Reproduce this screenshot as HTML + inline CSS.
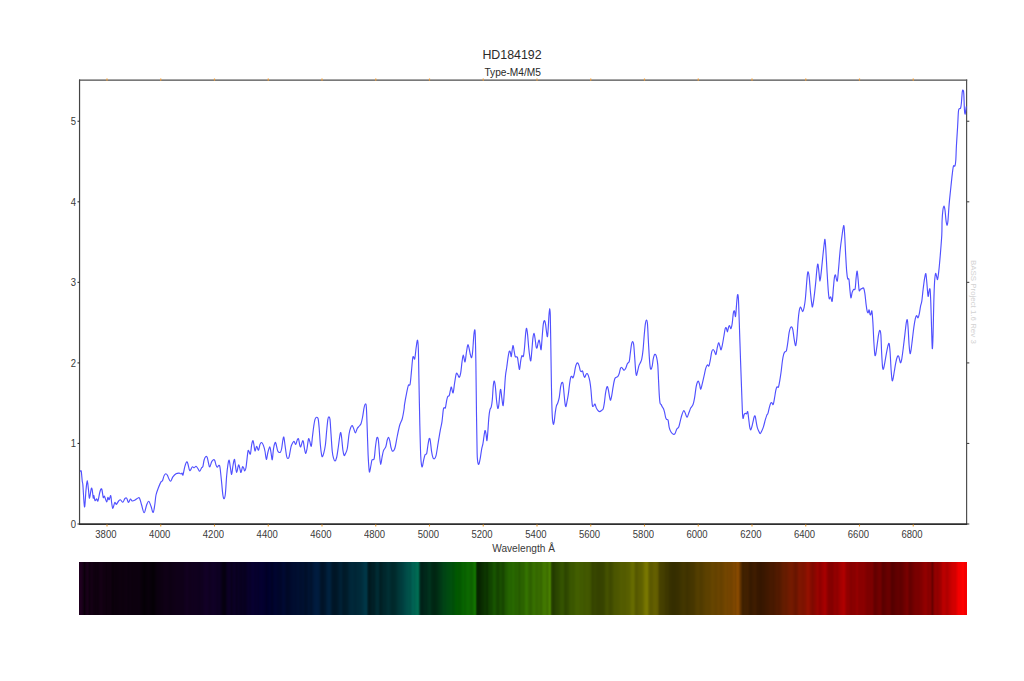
<!DOCTYPE html>
<html><head><meta charset="utf-8"><title>HD184192</title>
<style>
html,body{margin:0;padding:0;background:#fff;}
body{width:1024px;height:681px;position:relative;overflow:hidden;font-family:"Liberation Sans",sans-serif;color:#333;}
.t1{position:absolute;left:412px;width:200px;top:48px;text-align:center;font-size:12.4px;line-height:14px;color:#2a2a2a;}
.t2{position:absolute;left:412.7px;width:200px;top:66.8px;text-align:center;font-size:10.2px;line-height:12px;color:#2a2a2a;}
.xl{position:absolute;top:528.4px;width:40px;text-align:center;font-size:9.5px;line-height:11px;color:#3a3a3a;transform:scaleY(1.17);transform-origin:50% 50%;}
.yl{position:absolute;left:40px;width:36px;text-align:right;font-size:9.5px;line-height:12px;color:#3a3a3a;transform:scaleY(1.17);transform-origin:50% 50%;}
.xt{position:absolute;left:423.6px;width:200px;top:543.4px;text-align:center;font-size:10.15px;line-height:12px;color:#3a3a3a;}
.wm{position:absolute;left:978.4px;top:260px;font-size:7.9px;line-height:9px;color:#d2d2d2;white-space:nowrap;transform-origin:0 0;transform:rotate(90deg);}
</style></head><body>
<svg width="1024" height="681" viewBox="0 0 1024 681" style="position:absolute;left:0;top:0">
<line x1="79" y1="80.2" x2="967.2" y2="80.2" stroke="#4c4c4c" stroke-width="1.3"/>
<line x1="79.55" y1="79.6" x2="79.55" y2="524.8" stroke="#444" stroke-width="1.2"/>
<line x1="966.6" y1="79.6" x2="966.6" y2="524.8" stroke="#505050" stroke-width="1.2"/>
<line x1="79" y1="524.1" x2="967.2" y2="524.1" stroke="#2e2e2e" stroke-width="1.8"/>
<line x1="107.00" y1="78.5" x2="107.00" y2="80.7" stroke="#f0a040" stroke-width="1.2"/>
<line x1="107.00" y1="524.6" x2="107.00" y2="526.5" stroke="#f0a030" stroke-width="1.1"/>
<line x1="160.75" y1="78.5" x2="160.75" y2="80.7" stroke="#f0a040" stroke-width="1.2"/>
<line x1="160.75" y1="524.6" x2="160.75" y2="526.5" stroke="#f0a030" stroke-width="1.1"/>
<line x1="214.50" y1="78.5" x2="214.50" y2="80.7" stroke="#f0a040" stroke-width="1.2"/>
<line x1="214.50" y1="524.6" x2="214.50" y2="526.5" stroke="#f0a030" stroke-width="1.1"/>
<line x1="268.25" y1="78.5" x2="268.25" y2="80.7" stroke="#f0a040" stroke-width="1.2"/>
<line x1="268.25" y1="524.6" x2="268.25" y2="526.5" stroke="#f0a030" stroke-width="1.1"/>
<line x1="322.00" y1="78.5" x2="322.00" y2="80.7" stroke="#f0a040" stroke-width="1.2"/>
<line x1="322.00" y1="524.6" x2="322.00" y2="526.5" stroke="#f0a030" stroke-width="1.1"/>
<line x1="375.75" y1="78.5" x2="375.75" y2="80.7" stroke="#f0a040" stroke-width="1.2"/>
<line x1="375.75" y1="524.6" x2="375.75" y2="526.5" stroke="#f0a030" stroke-width="1.1"/>
<line x1="429.50" y1="78.5" x2="429.50" y2="80.7" stroke="#f0a040" stroke-width="1.2"/>
<line x1="429.50" y1="524.6" x2="429.50" y2="526.5" stroke="#f0a030" stroke-width="1.1"/>
<line x1="483.25" y1="78.5" x2="483.25" y2="80.7" stroke="#f0a040" stroke-width="1.2"/>
<line x1="483.25" y1="524.6" x2="483.25" y2="526.5" stroke="#f0a030" stroke-width="1.1"/>
<line x1="537.00" y1="78.5" x2="537.00" y2="80.7" stroke="#f0a040" stroke-width="1.2"/>
<line x1="537.00" y1="524.6" x2="537.00" y2="526.5" stroke="#f0a030" stroke-width="1.1"/>
<line x1="590.75" y1="78.5" x2="590.75" y2="80.7" stroke="#f0a040" stroke-width="1.2"/>
<line x1="590.75" y1="524.6" x2="590.75" y2="526.5" stroke="#f0a030" stroke-width="1.1"/>
<line x1="644.50" y1="78.5" x2="644.50" y2="80.7" stroke="#f0a040" stroke-width="1.2"/>
<line x1="644.50" y1="524.6" x2="644.50" y2="526.5" stroke="#f0a030" stroke-width="1.1"/>
<line x1="698.25" y1="78.5" x2="698.25" y2="80.7" stroke="#f0a040" stroke-width="1.2"/>
<line x1="698.25" y1="524.6" x2="698.25" y2="526.5" stroke="#f0a030" stroke-width="1.1"/>
<line x1="752.00" y1="78.5" x2="752.00" y2="80.7" stroke="#f0a040" stroke-width="1.2"/>
<line x1="752.00" y1="524.6" x2="752.00" y2="526.5" stroke="#f0a030" stroke-width="1.1"/>
<line x1="805.75" y1="78.5" x2="805.75" y2="80.7" stroke="#f0a040" stroke-width="1.2"/>
<line x1="805.75" y1="524.6" x2="805.75" y2="526.5" stroke="#f0a030" stroke-width="1.1"/>
<line x1="859.50" y1="78.5" x2="859.50" y2="80.7" stroke="#f0a040" stroke-width="1.2"/>
<line x1="859.50" y1="524.6" x2="859.50" y2="526.5" stroke="#f0a030" stroke-width="1.1"/>
<line x1="913.25" y1="78.5" x2="913.25" y2="80.7" stroke="#f0a040" stroke-width="1.2"/>
<line x1="913.25" y1="524.6" x2="913.25" y2="526.5" stroke="#f0a030" stroke-width="1.1"/>
<line x1="77.5" y1="524.00" x2="79.5" y2="524.00" stroke="#333" stroke-width="1.1"/>
<line x1="967" y1="524.00" x2="969.3" y2="524.00" stroke="#444" stroke-width="1.1"/>
<line x1="77.5" y1="443.45" x2="79.5" y2="443.45" stroke="#333" stroke-width="1.1"/>
<line x1="967" y1="443.45" x2="969.3" y2="443.45" stroke="#444" stroke-width="1.1"/>
<line x1="77.5" y1="362.90" x2="79.5" y2="362.90" stroke="#333" stroke-width="1.1"/>
<line x1="967" y1="362.90" x2="969.3" y2="362.90" stroke="#444" stroke-width="1.1"/>
<line x1="77.5" y1="282.35" x2="79.5" y2="282.35" stroke="#333" stroke-width="1.1"/>
<line x1="967" y1="282.35" x2="969.3" y2="282.35" stroke="#444" stroke-width="1.1"/>
<line x1="77.5" y1="201.80" x2="79.5" y2="201.80" stroke="#333" stroke-width="1.1"/>
<line x1="967" y1="201.80" x2="969.3" y2="201.80" stroke="#444" stroke-width="1.1"/>
<line x1="77.5" y1="121.25" x2="79.5" y2="121.25" stroke="#333" stroke-width="1.1"/>
<line x1="967" y1="121.25" x2="969.3" y2="121.25" stroke="#444" stroke-width="1.1"/>
<path d="M80.00 471.50 C80.06 471.46 80.17 471.29 80.38 471.25 C80.58 471.21 80.94 469.58 81.25 471.25 C81.56 472.92 81.98 478.96 82.25 481.25 C82.52 483.54 82.50 480.73 82.88 485.00 C83.25 489.27 83.98 506.04 84.50 506.88 C85.02 507.71 85.54 494.38 86.00 490.00 C86.46 485.62 86.83 480.62 87.25 480.62 C87.67 480.62 88.12 487.08 88.50 490.00 C88.88 492.92 89.04 498.33 89.50 498.12 C89.96 497.92 90.79 490.10 91.25 488.75 C91.71 487.40 91.92 488.44 92.25 490.00 C92.58 491.56 92.98 497.19 93.25 498.12 C93.52 499.06 93.58 495.21 93.88 495.62 C94.17 496.04 94.54 500.10 95.00 500.62 C95.46 501.15 96.15 498.69 96.62 498.75 C97.10 498.81 97.35 502.04 97.88 501.00 C98.40 499.96 99.23 494.50 99.75 492.50 C100.27 490.50 100.62 489.42 101.00 489.00 C101.38 488.58 101.62 488.58 102.00 490.00 C102.38 491.42 102.83 496.46 103.25 497.50 C103.67 498.54 103.94 495.52 104.50 496.25 C105.06 496.98 106.06 501.67 106.62 501.88 C107.19 502.08 107.46 497.85 107.88 497.50 C108.29 497.15 108.65 500.06 109.12 499.75 C109.60 499.44 110.33 495.17 110.75 495.62 C111.17 496.08 111.27 500.35 111.62 502.50 C111.98 504.65 112.35 508.50 112.88 508.50 C113.40 508.50 114.19 503.19 114.75 502.50 C115.31 501.81 115.62 504.58 116.25 504.38 C116.88 504.17 117.81 502.02 118.50 501.25 C119.19 500.48 119.65 499.58 120.38 499.75 C121.10 499.92 122.15 502.42 122.88 502.25 C123.60 502.08 124.12 499.44 124.75 498.75 C125.38 498.06 126.00 497.50 126.62 498.12 C127.25 498.75 127.88 502.35 128.50 502.50 C129.12 502.65 129.75 499.25 130.38 499.00 C131.00 498.75 131.52 500.79 132.25 501.00 C132.98 501.21 133.71 500.79 134.75 500.25 C135.79 499.71 137.67 498.00 138.50 497.75 C139.33 497.50 139.23 497.54 139.75 498.75 C140.27 499.96 140.90 502.67 141.62 505.00 C142.35 507.33 143.29 512.75 144.12 512.75 C144.96 512.75 145.85 506.92 146.62 505.00 C147.40 503.08 148.02 501.04 148.75 501.25 C149.48 501.46 150.27 504.38 151.00 506.25 C151.73 508.12 152.50 512.71 153.12 512.50 C153.75 512.29 154.27 507.92 154.75 505.00 C155.23 502.08 155.38 497.92 156.00 495.00 C156.62 492.08 157.67 489.69 158.50 487.50 C159.33 485.31 160.33 483.02 161.00 481.88 C161.67 480.73 161.98 481.67 162.50 480.62 C163.02 479.58 163.58 476.77 164.12 475.62 C164.67 474.48 165.23 473.85 165.75 473.75 C166.27 473.65 166.48 473.75 167.25 475.00 C168.02 476.25 169.44 480.94 170.38 481.25 C171.31 481.56 171.94 478.12 172.88 476.88 C173.81 475.62 174.96 474.38 176.00 473.75 C177.04 473.12 178.29 473.08 179.12 473.12 C179.96 473.17 180.52 474.00 181.00 474.00 C181.48 474.00 181.67 472.96 182.00 473.12 C182.33 473.29 182.54 476.04 183.00 475.00 C183.46 473.96 184.15 469.06 184.75 466.88 C185.35 464.69 186.10 462.40 186.62 461.88 C187.15 461.35 187.35 462.29 187.88 463.75 C188.40 465.21 189.02 470.10 189.75 470.62 C190.48 471.15 191.52 467.35 192.25 466.88 C192.98 466.40 193.50 467.85 194.12 467.75 C194.75 467.65 195.38 466.12 196.00 466.25 C196.62 466.38 197.25 467.67 197.88 468.50 C198.50 469.33 199.12 471.38 199.75 471.25 C200.38 471.12 201.10 468.54 201.62 467.75 C202.15 466.96 202.46 467.79 202.88 466.50 C203.29 465.21 203.65 461.65 204.12 460.00 C204.60 458.35 205.23 457.04 205.75 456.62 C206.27 456.21 206.79 456.42 207.25 457.50 C207.71 458.58 208.08 461.56 208.50 463.12 C208.92 464.69 209.23 467.08 209.75 466.88 C210.27 466.67 211.00 463.06 211.62 461.88 C212.25 460.69 212.98 459.96 213.50 459.75 C214.02 459.54 214.33 459.75 214.75 460.62 C215.17 461.50 215.58 463.90 216.00 465.00 C216.42 466.10 216.77 467.21 217.25 467.25 C217.73 467.29 218.42 465.21 218.88 465.25 C219.33 465.29 219.54 464.62 220.00 467.50 C220.46 470.38 221.15 477.92 221.62 482.50 C222.10 487.08 222.46 492.29 222.88 495.00 C223.29 497.71 223.71 498.96 224.12 498.75 C224.54 498.54 224.96 497.50 225.38 493.75 C225.79 490.00 226.21 481.04 226.62 476.25 C227.04 471.46 227.46 467.67 227.88 465.00 C228.29 462.33 228.71 459.83 229.12 460.25 C229.54 460.67 229.96 465.15 230.38 467.50 C230.79 469.85 231.21 474.58 231.62 474.38 C232.04 474.17 232.42 468.75 232.88 466.25 C233.33 463.75 233.96 459.58 234.38 459.38 C234.79 459.17 235.00 462.81 235.38 465.00 C235.75 467.19 236.10 472.50 236.62 472.50 C237.15 472.50 237.98 465.73 238.50 465.00 C239.02 464.27 239.33 466.88 239.75 468.12 C240.17 469.38 240.54 472.71 241.00 472.50 C241.46 472.29 242.04 467.60 242.50 466.88 C242.96 466.15 243.38 467.44 243.75 468.12 C244.12 468.81 244.38 471.10 244.75 471.00 C245.12 470.90 245.48 470.69 246.00 467.50 C246.52 464.31 247.42 454.62 247.88 451.88 C248.33 449.12 248.33 450.65 248.75 451.00 C249.17 451.35 249.90 455.00 250.38 454.00 C250.85 453.00 251.21 447.23 251.62 445.00 C252.04 442.77 252.50 440.73 252.88 440.62 C253.25 440.52 253.52 442.65 253.88 444.38 C254.23 446.10 254.54 450.69 255.00 451.00 C255.46 451.31 256.04 446.38 256.62 446.25 C257.21 446.12 257.94 450.56 258.50 450.25 C259.06 449.94 259.48 445.67 260.00 444.38 C260.52 443.08 261.04 442.29 261.62 442.50 C262.21 442.71 262.94 444.17 263.50 445.62 C264.06 447.08 264.52 448.96 265.00 451.25 C265.48 453.54 265.90 459.17 266.38 459.38 C266.85 459.58 267.31 454.58 267.88 452.50 C268.44 450.42 269.23 446.88 269.75 446.88 C270.27 446.88 270.58 450.35 271.00 452.50 C271.42 454.65 271.83 460.38 272.25 459.75 C272.67 459.12 273.04 451.58 273.50 448.75 C273.96 445.92 274.58 443.58 275.00 442.75 C275.42 441.92 275.52 442.33 276.00 443.75 C276.48 445.17 277.15 449.83 277.88 451.25 C278.60 452.67 279.75 452.67 280.38 452.25 C281.00 451.83 281.21 450.79 281.62 448.75 C282.04 446.71 282.50 441.92 282.88 440.00 C283.25 438.08 283.52 436.42 283.88 437.25 C284.23 438.08 284.54 441.83 285.00 445.00 C285.46 448.17 286.15 454.00 286.62 456.25 C287.10 458.50 287.46 458.40 287.88 458.50 C288.29 458.60 288.60 458.81 289.12 456.88 C289.65 454.94 290.38 449.27 291.00 446.88 C291.62 444.48 292.35 443.40 292.88 442.50 C293.40 441.60 293.65 441.19 294.12 441.50 C294.60 441.81 295.23 444.62 295.75 444.38 C296.27 444.12 296.79 440.94 297.25 440.00 C297.71 439.06 298.08 437.92 298.50 438.75 C298.92 439.58 299.38 443.65 299.75 445.00 C300.12 446.35 300.33 447.40 300.75 446.88 C301.17 446.35 301.83 442.81 302.25 441.88 C302.67 440.94 302.88 440.10 303.25 441.25 C303.62 442.40 304.08 446.71 304.50 448.75 C304.92 450.79 305.33 453.50 305.75 453.50 C306.17 453.50 306.54 451.17 307.00 448.75 C307.46 446.33 308.04 440.25 308.50 439.00 C308.96 437.75 309.29 440.04 309.75 441.25 C310.21 442.46 310.79 447.08 311.25 446.25 C311.71 445.42 312.08 439.58 312.50 436.25 C312.92 432.92 313.33 429.06 313.75 426.25 C314.17 423.44 314.52 420.88 315.00 419.38 C315.48 417.88 316.10 417.35 316.62 417.25 C317.15 417.15 317.71 417.04 318.12 418.75 C318.54 420.46 318.75 423.12 319.12 427.50 C319.50 431.88 319.96 440.42 320.38 445.00 C320.79 449.58 321.27 453.08 321.62 455.00 C321.98 456.92 322.15 456.81 322.50 456.50 C322.85 456.19 323.27 455.04 323.75 453.12 C324.23 451.21 324.90 448.65 325.38 445.00 C325.85 441.35 326.21 435.52 326.62 431.25 C327.04 426.98 327.50 421.77 327.88 419.38 C328.25 416.98 328.52 416.88 328.88 416.88 C329.23 416.88 329.65 416.56 330.00 419.38 C330.35 422.19 330.62 428.44 331.00 433.75 C331.38 439.06 331.83 447.19 332.25 451.25 C332.67 455.31 333.04 456.50 333.50 458.12 C333.96 459.75 334.48 461.10 335.00 461.00 C335.52 460.90 336.08 459.75 336.62 457.50 C337.17 455.25 337.73 451.04 338.25 447.50 C338.77 443.96 339.33 438.75 339.75 436.25 C340.17 433.75 340.44 432.29 340.75 432.50 C341.06 432.71 341.27 434.58 341.62 437.50 C341.98 440.42 342.46 447.02 342.88 450.00 C343.29 452.98 343.71 454.75 344.12 455.38 C344.54 456.00 344.85 454.85 345.38 453.75 C345.90 452.65 346.62 452.08 347.25 448.75 C347.88 445.42 348.54 437.29 349.12 433.75 C349.71 430.21 350.23 428.85 350.75 427.50 C351.27 426.15 351.75 425.42 352.25 425.62 C352.75 425.83 353.23 427.54 353.75 428.75 C354.27 429.96 354.79 432.92 355.38 432.88 C355.96 432.83 356.62 429.60 357.25 428.50 C357.88 427.40 358.50 427.04 359.12 426.25 C359.75 425.46 360.44 425.21 361.00 423.75 C361.56 422.29 361.98 420.21 362.50 417.50 C363.02 414.79 363.65 409.75 364.12 407.50 C364.60 405.25 365.00 404.00 365.38 404.00 C365.75 404.00 366.06 403.17 366.38 407.50 C366.69 411.83 366.96 422.08 367.25 430.00 C367.54 437.92 367.81 448.33 368.12 455.00 C368.44 461.67 368.85 467.25 369.12 470.00 C369.40 472.75 369.44 472.33 369.75 471.50 C370.06 470.67 370.62 466.92 371.00 465.00 C371.38 463.08 371.48 461.04 372.00 460.00 C372.52 458.96 373.56 460.83 374.12 458.75 C374.69 456.67 374.96 450.83 375.38 447.50 C375.79 444.17 376.25 440.42 376.62 438.75 C377.00 437.08 377.31 437.08 377.62 437.50 C377.94 437.92 378.15 437.92 378.50 441.25 C378.85 444.58 379.38 453.65 379.75 457.50 C380.12 461.35 380.38 464.38 380.75 464.38 C381.12 464.38 381.54 459.79 382.00 457.50 C382.46 455.21 382.88 452.40 383.50 450.62 C384.12 448.85 385.12 448.65 385.75 446.88 C386.38 445.10 386.79 441.60 387.25 440.00 C387.71 438.40 388.08 437.15 388.50 437.25 C388.92 437.35 389.33 438.92 389.75 440.62 C390.17 442.33 390.58 445.77 391.00 447.50 C391.42 449.23 391.73 450.58 392.25 451.00 C392.77 451.42 393.60 450.79 394.12 450.00 C394.65 449.21 394.85 448.54 395.38 446.25 C395.90 443.96 396.52 439.79 397.25 436.25 C397.98 432.71 398.92 427.92 399.75 425.00 C400.58 422.08 401.52 421.46 402.25 418.75 C402.98 416.04 403.75 411.12 404.12 408.75 C404.50 406.38 404.12 407.20 404.52 404.54 C404.94 401.89 406.01 396.02 406.65 392.83 C407.29 389.63 407.78 386.79 408.35 385.37 C408.92 383.95 409.56 386.44 410.06 384.31 C410.55 382.18 410.91 376.86 411.33 372.60 C411.76 368.34 412.26 361.41 412.61 358.75 C412.97 356.09 413.11 356.62 413.46 356.62 C413.82 356.62 414.28 360.35 414.74 358.75 C415.20 357.15 415.77 350.13 416.23 347.04 C416.69 343.95 417.16 339.87 417.51 340.22 C417.87 340.58 418.11 342.00 418.36 349.17 C418.61 356.34 418.75 370.47 419.00 383.24 C419.25 396.02 419.57 413.77 419.85 425.84 C420.14 437.91 420.42 449.09 420.71 455.66 C420.99 462.22 421.27 463.47 421.56 465.24 C421.84 467.02 422.05 467.19 422.41 466.31 C422.76 465.42 423.23 461.87 423.69 459.92 C424.15 457.96 424.68 455.66 425.18 454.59 C425.67 453.53 426.21 455.12 426.67 453.53 C427.13 451.93 427.52 447.49 427.95 445.01 C428.37 442.52 428.83 439.33 429.22 438.62 C429.62 437.91 429.90 438.62 430.29 440.75 C430.68 442.88 431.14 448.63 431.57 451.40 C431.99 454.17 432.38 456.12 432.85 457.36 C433.31 458.60 433.80 459.14 434.34 458.85 C434.87 458.57 435.40 458.32 436.04 455.66 C436.68 453.00 437.46 447.14 438.17 442.88 C438.88 438.62 439.66 433.65 440.30 430.10 C440.94 426.55 441.51 424.95 442.00 421.58 C442.50 418.21 442.93 412.17 443.28 409.87 C443.64 407.56 443.78 408.09 444.13 407.74 C444.49 407.38 444.99 408.98 445.41 407.74 C445.84 406.49 446.30 402.16 446.69 400.28 C447.08 398.40 447.33 397.23 447.75 396.45 C448.18 395.67 448.82 396.56 449.24 395.60 C449.67 394.64 449.95 392.12 450.31 390.70 C450.66 389.28 450.91 386.72 451.37 387.08 C451.84 387.43 452.55 393.47 453.08 392.83 C453.61 392.19 454.04 386.44 454.57 383.24 C455.10 380.05 455.74 375.08 456.27 373.66 C456.81 372.24 457.27 374.12 457.76 374.73 C458.26 375.33 458.76 377.64 459.25 377.28 C459.75 376.93 460.28 375.15 460.75 372.60 C461.21 370.04 461.60 364.86 462.02 361.95 C462.45 359.04 462.80 355.13 463.30 355.13 C463.80 355.13 464.51 362.23 465.00 361.95 C465.50 361.66 465.82 356.27 466.28 353.43 C466.74 350.59 467.31 345.80 467.77 344.91 C468.24 344.02 468.63 346.51 469.05 348.10 C469.48 349.70 469.90 352.90 470.33 354.49 C470.76 356.09 471.22 358.22 471.61 357.69 C472.00 357.15 472.32 354.85 472.67 351.30 C473.03 347.75 473.42 339.94 473.74 336.39 C474.06 332.84 474.34 330.35 474.59 330.00 C474.84 329.65 475.01 328.94 475.23 334.26 C475.44 339.58 475.65 348.46 475.87 361.95 C476.08 375.44 476.29 399.93 476.51 415.19 C476.72 430.45 476.90 445.54 477.14 453.53 C477.39 461.51 477.68 461.41 478.00 463.11 C478.32 464.82 478.67 464.64 479.06 463.75 C479.45 462.86 479.91 460.20 480.34 457.79 C480.77 455.37 481.19 451.58 481.62 449.27 C482.04 446.96 482.50 446.07 482.90 443.94 C483.29 441.81 483.61 438.73 483.96 436.49 C484.32 434.25 484.67 430.88 485.02 430.53 C485.38 430.17 485.77 432.66 486.09 434.36 C486.41 436.06 486.66 441.10 486.94 440.75 C487.23 440.39 487.47 436.13 487.79 432.23 C488.11 428.33 488.50 421.05 488.86 417.32 C489.21 413.59 489.53 411.57 489.92 409.87 C490.31 408.16 490.81 408.70 491.20 407.10 C491.59 405.50 491.91 403.90 492.27 400.28 C492.62 396.66 492.98 388.57 493.33 385.37 C493.69 382.18 494.04 380.76 494.40 381.11 C494.75 381.47 495.11 384.31 495.46 387.50 C495.82 390.70 496.14 396.80 496.53 400.28 C496.92 403.76 497.41 407.67 497.80 408.38 C498.19 409.09 498.51 407.13 498.87 404.54 C499.22 401.95 499.61 395.31 499.93 392.83 C500.25 390.34 500.47 388.75 500.79 389.63 C501.10 390.52 501.46 395.49 501.85 398.15 C502.24 400.82 502.74 406.32 503.13 405.61 C503.52 404.90 503.80 398.86 504.19 393.89 C504.58 388.92 505.04 380.23 505.47 375.79 C505.90 371.35 506.32 370.29 506.75 367.27 C507.17 364.25 507.60 360.35 508.03 357.69 C508.45 355.02 508.91 352.19 509.30 351.30 C509.69 350.41 510.05 351.48 510.37 352.36 C510.69 353.25 510.90 357.15 511.22 356.62 C511.54 356.09 511.97 351.01 512.29 349.17 C512.61 347.32 512.82 345.19 513.14 345.55 C513.46 345.90 513.85 349.45 514.20 351.30 C514.56 353.14 514.74 355.63 515.27 356.62 C515.80 357.62 516.87 356.02 517.40 357.26 C517.93 358.50 518.11 362.05 518.46 364.08 C518.82 366.10 519.16 369.90 519.53 369.40 C519.90 368.90 520.31 363.37 520.69 361.10 C521.08 358.82 521.39 356.55 521.84 355.75 C522.28 354.96 522.92 357.66 523.37 356.32 C523.81 354.99 524.13 351.55 524.51 347.73 C524.89 343.91 525.31 336.66 525.66 333.41 C526.01 330.17 526.29 328.10 526.61 328.26 C526.93 328.42 527.22 331.12 527.57 334.37 C527.92 337.61 528.33 343.91 528.71 347.73 C529.09 351.55 529.51 355.12 529.86 357.28 C530.21 359.44 530.49 361.67 530.81 360.72 C531.13 359.76 531.42 355.31 531.77 351.55 C532.12 347.80 532.53 341.21 532.91 338.19 C533.29 335.16 533.71 333.41 534.06 333.41 C534.41 333.41 534.66 335.96 535.01 338.19 C535.36 340.41 535.81 345.19 536.16 346.78 C536.51 348.37 536.79 348.37 537.11 347.73 C537.43 347.10 537.72 344.23 538.07 342.96 C538.42 341.69 538.86 339.78 539.21 340.10 C539.56 340.41 539.85 343.28 540.17 344.87 C540.49 346.46 540.80 350.76 541.12 349.64 C541.44 348.53 541.73 342.32 542.08 338.19 C542.43 334.05 542.84 327.75 543.22 324.82 C543.60 321.89 543.99 320.78 544.37 320.62 C544.75 320.46 545.16 322.05 545.51 323.87 C545.86 325.68 546.15 329.37 546.47 331.50 C546.79 333.64 547.14 337.14 547.42 336.66 C547.71 336.18 547.93 332.20 548.19 328.64 C548.44 325.08 548.70 318.62 548.95 315.27 C549.20 311.93 549.49 308.59 549.71 308.59 C549.94 308.59 550.10 308.75 550.29 315.27 C550.48 321.80 550.67 335.96 550.86 347.73 C551.05 359.51 551.21 374.78 551.43 385.92 C551.65 397.06 551.91 408.26 552.20 414.56 C552.48 420.86 552.83 422.45 553.15 423.72 C553.47 425.00 553.75 424.04 554.11 422.20 C554.46 420.35 554.87 415.35 555.25 412.65 C555.63 409.94 555.98 407.56 556.40 405.97 C556.81 404.38 557.26 404.53 557.73 403.10 C558.21 401.67 558.78 400.08 559.26 397.37 C559.74 394.67 560.15 389.36 560.60 386.87 C561.04 384.39 561.52 382.96 561.93 382.48 C562.35 382.00 562.73 382.16 563.08 384.01 C563.43 385.86 563.72 390.37 564.03 393.56 C564.35 396.74 564.67 400.94 564.99 403.10 C565.31 405.27 565.59 406.86 565.94 406.54 C566.29 406.22 566.67 403.36 567.09 401.19 C567.50 399.03 568.01 396.42 568.42 393.56 C568.84 390.69 569.19 386.71 569.57 384.01 C569.95 381.30 570.33 378.60 570.72 377.33 C571.10 376.05 571.48 376.28 571.86 376.37 C572.24 376.47 572.63 378.22 573.01 377.90 C573.39 377.58 573.77 376.15 574.15 374.46 C574.53 372.78 574.92 369.53 575.30 367.78 C575.68 366.03 576.03 364.76 576.44 363.96 C576.86 363.17 577.33 362.69 577.78 363.01 C578.23 363.33 578.70 364.60 579.12 365.87 C579.53 367.14 579.88 369.69 580.26 370.64 C580.64 371.60 581.03 371.54 581.41 371.60 C581.79 371.66 582.17 370.39 582.55 371.03 C582.94 371.66 583.32 374.37 583.70 375.42 C584.08 376.47 584.46 377.49 584.84 377.33 C585.23 377.17 585.61 375.10 585.99 374.46 C586.37 373.83 586.75 373.35 587.14 373.51 C587.52 373.67 587.84 374.14 588.28 375.42 C588.73 376.69 589.36 378.76 589.81 381.15 C590.25 383.53 590.64 386.71 590.95 389.74 C591.27 392.76 591.46 396.58 591.72 399.28 C591.97 401.99 592.16 404.85 592.48 405.97 C592.80 407.08 593.21 406.28 593.63 405.97 C594.04 405.65 594.52 403.74 594.96 404.06 C595.41 404.38 595.82 406.83 596.30 407.88 C596.78 408.93 597.26 409.72 597.83 410.36 C598.40 410.99 599.10 411.69 599.74 411.69 C600.37 411.69 601.07 410.84 601.65 410.36 C602.22 409.88 602.73 410.04 603.17 408.83 C603.62 407.62 603.94 405.65 604.32 403.10 C604.70 400.56 605.08 396.10 605.47 393.56 C605.85 391.01 606.26 388.94 606.61 387.83 C606.96 386.71 607.25 386.40 607.57 386.87 C607.88 387.35 608.17 388.94 608.52 390.69 C608.87 392.44 609.32 395.78 609.67 397.37 C610.02 398.97 610.27 400.56 610.62 400.24 C610.97 399.92 611.35 397.69 611.77 395.47 C612.18 393.24 612.63 389.58 613.10 386.87 C613.58 384.17 614.12 380.83 614.63 379.24 C615.14 377.65 615.62 377.80 616.16 377.33 C616.70 376.85 617.37 377.01 617.88 376.37 C618.39 375.74 618.80 374.78 619.21 373.51 C619.63 372.24 619.98 369.79 620.36 368.74 C620.74 367.68 621.06 367.14 621.50 367.21 C621.95 367.27 622.59 368.61 623.03 369.12 C623.48 369.63 623.73 370.39 624.18 370.26 C624.62 370.14 625.19 369.40 625.70 368.35 C626.21 367.30 626.79 364.92 627.23 363.96 C627.68 363.01 628.03 363.10 628.38 362.63 C628.73 362.15 629.01 362.63 629.33 361.10 C629.65 359.57 629.94 356.17 630.29 353.46 C630.64 350.76 631.05 346.84 631.43 344.87 C631.81 342.90 632.20 341.62 632.58 341.62 C632.96 341.62 633.37 342.26 633.72 344.87 C634.07 347.48 634.36 352.98 634.68 357.28 C635.00 361.58 635.35 367.62 635.63 370.64 C635.92 373.67 636.08 375.26 636.40 375.42 C636.71 375.58 637.13 373.19 637.54 371.60 C637.96 370.01 638.43 367.30 638.88 365.87 C639.32 364.44 639.74 364.12 640.21 363.01 C640.69 361.89 641.26 361.42 641.74 359.19 C642.22 356.96 642.67 353.62 643.08 349.64 C643.49 345.66 643.84 339.62 644.22 335.32 C644.61 331.03 644.99 326.41 645.37 323.87 C645.75 321.32 646.17 320.05 646.52 320.05 C646.87 320.05 647.18 320.84 647.47 323.87 C647.76 326.89 647.95 332.94 648.23 338.19 C648.52 343.44 648.87 350.60 649.19 355.37 C649.51 360.14 649.82 364.53 650.14 366.83 C650.46 369.12 650.75 369.28 651.10 369.12 C651.45 368.96 651.89 367.53 652.24 365.87 C652.59 364.22 652.85 361.00 653.20 359.19 C653.55 357.37 653.96 355.78 654.34 354.99 C654.73 354.19 655.11 354.03 655.49 354.42 C655.87 354.80 656.25 355.53 656.63 357.28 C657.02 359.03 657.46 361.10 657.78 364.92 C658.10 368.74 658.29 375.10 658.54 380.19 C658.80 385.28 659.05 391.65 659.31 395.47 C659.56 399.28 659.75 401.58 660.07 403.10 C660.39 404.63 660.84 403.99 661.22 404.63 C661.60 405.27 661.98 406.22 662.36 406.92 C662.74 407.62 663.13 407.88 663.51 408.83 C663.89 409.79 664.30 411.22 664.65 412.65 C665.00 414.08 665.29 416.31 665.61 417.42 C665.93 418.54 666.15 418.85 666.56 419.33 C666.98 419.81 667.64 418.90 668.09 420.29 C668.54 421.68 668.76 425.70 669.25 427.67 C669.74 429.63 670.35 430.97 671.01 432.07 C671.67 433.17 672.56 434.02 673.22 434.27 C673.88 434.53 674.39 434.46 674.98 433.61 C675.57 432.77 676.12 430.31 676.74 429.21 C677.36 428.11 678.14 428.36 678.72 427.00 C679.31 425.65 679.71 423.15 680.26 421.06 C680.81 418.96 681.44 416.21 682.03 414.45 C682.61 412.69 683.24 410.67 683.79 410.48 C684.34 410.30 684.78 412.21 685.33 413.35 C685.88 414.49 686.47 417.50 687.09 417.31 C687.72 417.13 688.45 413.83 689.07 412.25 C689.70 410.67 690.18 409.13 690.84 407.84 C691.50 406.56 692.42 406.19 693.04 404.54 C693.66 402.89 694.07 400.87 694.58 397.93 C695.10 394.99 695.65 389.56 696.12 386.92 C696.60 384.27 697.04 382.99 697.44 382.07 C697.85 381.15 698.18 380.97 698.55 381.41 C698.91 381.85 699.28 383.43 699.65 384.71 C700.01 386.00 700.31 389.30 700.75 389.12 C701.19 388.94 701.74 385.81 702.29 383.61 C702.84 381.41 703.47 378.47 704.05 375.90 C704.64 373.33 705.26 370.03 705.81 368.19 C706.37 366.36 706.84 365.26 707.36 364.89 C707.87 364.52 708.42 366.73 708.90 365.99 C709.38 365.26 709.74 362.87 710.22 360.48 C710.70 358.10 711.28 353.51 711.76 351.67 C712.24 349.84 712.61 349.47 713.08 349.47 C713.56 349.47 714.15 350.83 714.63 351.67 C715.10 352.52 715.51 355.20 715.95 354.54 C716.39 353.88 716.83 349.65 717.27 347.71 C717.71 345.76 718.15 343.12 718.59 342.86 C719.03 342.61 719.51 344.99 719.91 346.17 C720.32 347.34 720.61 350.10 721.01 349.91 C721.42 349.73 721.86 347.34 722.33 345.07 C722.81 342.79 723.40 339.01 723.88 336.26 C724.35 333.50 724.79 329.94 725.20 328.55 C725.60 327.15 725.93 327.33 726.30 327.89 C726.67 328.44 727.03 331.92 727.40 331.85 C727.77 331.78 728.14 328.47 728.50 327.44 C728.87 326.42 729.20 325.50 729.60 325.68 C730.01 325.87 730.48 328.99 730.93 328.55 C731.37 328.11 731.84 325.61 732.25 323.04 C732.65 320.47 732.98 315.15 733.35 313.13 C733.72 311.11 734.08 310.37 734.45 310.93 C734.82 311.48 735.18 317.72 735.55 316.43 C735.92 315.15 736.32 306.81 736.65 303.22 C736.98 299.62 737.24 295.58 737.53 294.85 C737.83 294.11 738.12 294.11 738.41 298.81 C738.71 303.51 738.96 313.49 739.30 323.04 C739.63 332.58 740.03 345.43 740.40 356.08 C740.76 366.73 741.17 377.74 741.50 386.92 C741.83 396.09 742.12 405.90 742.38 411.15 C742.64 416.40 742.75 417.86 743.04 418.41 C743.33 418.96 743.74 415.29 744.14 414.45 C744.54 413.60 745.06 413.46 745.46 413.35 C745.87 413.24 746.20 414.08 746.56 413.79 C746.93 413.49 747.33 410.93 747.67 411.59 C748.00 412.25 748.22 415.26 748.55 417.75 C748.88 420.25 749.32 424.54 749.65 426.56 C749.98 428.58 750.20 429.68 750.53 429.87 C750.86 430.05 751.23 428.95 751.63 427.67 C752.03 426.38 752.55 423.88 752.95 422.16 C753.36 420.43 753.69 418.34 754.05 417.31 C754.42 416.28 754.79 415.18 755.15 415.99 C755.52 416.80 755.89 420.21 756.26 422.16 C756.62 424.10 756.95 426.20 757.36 427.67 C757.76 429.13 758.20 429.98 758.68 430.97 C759.16 431.96 759.71 433.61 760.22 433.61 C760.73 433.61 761.21 432.14 761.76 430.97 C762.31 429.79 762.94 428.40 763.52 426.56 C764.11 424.73 764.74 421.86 765.29 419.96 C765.84 418.05 766.39 416.21 766.83 415.11 C767.27 414.01 767.53 414.56 767.93 413.35 C768.33 412.14 768.81 409.49 769.25 407.84 C769.69 406.19 770.13 404.28 770.57 403.44 C771.01 402.59 771.45 402.59 771.89 402.78 C772.33 402.96 772.78 405.35 773.22 404.54 C773.66 403.73 774.10 400.32 774.54 397.93 C774.98 395.54 775.46 392.06 775.86 390.22 C776.26 388.38 776.52 387.47 776.96 386.92 C777.40 386.37 778.02 388.02 778.50 386.92 C778.98 385.81 779.38 382.88 779.82 380.31 C780.26 377.74 780.70 374.80 781.15 371.50 C781.59 368.19 782.03 363.42 782.47 360.48 C782.91 357.55 783.35 355.35 783.79 353.88 C784.23 352.41 784.67 352.22 785.11 351.67 C785.55 351.12 785.99 352.04 786.43 350.57 C786.87 349.10 787.31 345.80 787.75 342.86 C788.19 339.93 788.63 335.45 789.07 332.95 C789.52 330.46 789.96 328.88 790.40 327.89 C790.84 326.89 791.31 326.71 791.72 327.00 C792.12 327.30 792.45 327.92 792.82 329.65 C793.19 331.37 793.55 334.97 793.92 337.36 C794.29 339.74 794.69 342.68 795.02 343.96 C795.35 345.25 795.57 346.35 795.90 345.07 C796.23 343.78 796.64 340.29 797.00 336.26 C797.37 332.22 797.74 325.06 798.11 320.84 C798.47 316.62 798.84 313.20 799.21 310.93 C799.57 308.65 799.94 307.55 800.31 307.18 C800.68 306.81 801.01 307.99 801.41 308.72 C801.81 309.46 802.29 311.77 802.73 311.59 C803.17 311.40 803.61 309.75 804.05 307.62 C804.49 305.49 804.84 304.05 805.37 298.81 C805.90 293.57 806.76 280.64 807.23 276.16 C807.71 271.68 807.90 271.71 808.23 271.92 C808.56 272.12 808.85 274.00 809.23 277.41 C809.60 280.82 810.06 288.02 810.48 292.39 C810.89 296.75 811.39 301.21 811.73 303.62 C812.06 306.03 812.14 307.49 812.47 306.86 C812.81 306.24 813.22 303.54 813.72 299.88 C814.22 296.21 814.93 290.10 815.47 284.90 C816.01 279.70 816.55 272.12 816.97 268.67 C817.38 265.22 817.63 263.55 817.97 264.18 C818.30 264.80 818.63 269.59 818.96 272.42 C819.30 275.24 819.59 281.15 819.96 281.15 C820.34 281.15 820.71 276.78 821.21 272.42 C821.71 268.05 822.46 259.73 822.96 254.94 C823.46 250.16 823.87 246.29 824.21 243.71 C824.54 241.13 824.71 238.84 824.96 239.46 C825.21 240.09 825.37 242.38 825.70 247.45 C826.04 252.53 826.54 262.85 826.95 269.92 C827.37 276.99 827.83 285.11 828.20 289.89 C828.58 294.67 828.78 297.46 829.20 298.63 C829.62 299.79 830.20 296.46 830.70 296.88 C831.20 297.30 831.74 302.70 832.20 301.12 C832.65 299.54 833.07 291.35 833.44 287.39 C833.82 283.44 834.11 279.49 834.44 277.41 C834.77 275.33 835.11 274.58 835.44 274.91 C835.77 275.24 836.11 278.49 836.44 279.41 C836.77 280.32 837.06 282.40 837.44 280.40 C837.81 278.41 838.23 272.50 838.69 267.42 C839.14 262.35 839.64 255.15 840.18 249.95 C840.72 244.75 841.35 240.30 841.93 236.22 C842.51 232.14 843.22 225.69 843.68 225.48 C844.14 225.28 844.34 230.06 844.68 234.97 C845.01 239.88 845.34 248.91 845.68 254.94 C846.01 260.97 846.34 267.21 846.67 271.17 C847.01 275.12 847.30 277.28 847.67 278.66 C848.05 280.03 848.55 277.53 848.92 279.41 C849.30 281.28 849.59 286.81 849.92 289.89 C850.25 292.97 850.54 297.46 850.92 297.88 C851.29 298.29 851.71 293.80 852.17 292.39 C852.62 290.97 853.16 290.01 853.66 289.39 C854.16 288.77 854.75 290.64 855.16 288.64 C855.58 286.64 855.83 280.32 856.16 277.41 C856.49 274.50 856.83 270.75 857.16 271.17 C857.49 271.58 857.82 276.70 858.16 279.90 C858.49 283.11 858.78 288.81 859.16 290.39 C859.53 291.97 859.95 289.68 860.40 289.39 C860.86 289.10 861.36 288.85 861.90 288.64 C862.44 288.43 863.15 287.31 863.65 288.14 C864.15 288.97 864.48 290.85 864.90 293.63 C865.31 296.42 865.77 301.96 866.15 304.87 C866.52 307.78 866.81 309.78 867.14 311.11 C867.48 312.44 867.81 313.06 868.14 312.86 C868.48 312.65 868.81 309.53 869.14 309.86 C869.47 310.19 869.81 314.23 870.14 314.85 C870.47 315.48 870.85 314.23 871.14 313.60 C871.43 312.98 871.60 309.65 871.89 311.11 C872.18 312.56 872.55 317.14 872.89 322.34 C873.22 327.54 873.55 336.90 873.88 342.31 C874.22 347.72 874.55 352.92 874.88 354.79 C875.22 356.67 875.51 355.21 875.88 353.55 C876.26 351.88 876.67 348.01 877.13 344.81 C877.59 341.61 878.17 336.74 878.63 334.32 C879.08 331.91 879.50 330.25 879.88 330.33 C880.25 330.41 880.58 331.16 880.87 334.82 C881.16 338.49 881.33 346.81 881.62 352.30 C881.91 357.79 882.29 365.07 882.62 367.78 C882.95 370.48 883.25 369.44 883.62 368.52 C883.99 367.61 884.41 364.78 884.87 362.28 C885.33 359.79 885.87 356.25 886.37 353.55 C886.86 350.84 887.41 347.72 887.86 346.06 C888.32 344.39 888.74 342.52 889.11 343.56 C889.49 344.60 889.78 347.93 890.11 352.30 C890.44 356.67 890.78 365.11 891.11 369.77 C891.44 374.43 891.77 378.80 892.11 380.26 C892.44 381.71 892.73 380.05 893.11 378.51 C893.48 376.97 893.90 373.72 894.35 371.02 C894.81 368.32 895.35 364.65 895.85 362.28 C896.35 359.91 896.89 357.83 897.35 356.79 C897.81 355.75 898.22 355.54 898.60 356.04 C898.97 356.54 899.26 358.66 899.60 359.79 C899.93 360.91 900.22 362.99 900.59 362.78 C900.97 362.57 901.39 361.12 901.84 358.54 C902.30 355.96 902.84 351.26 903.34 347.31 C903.84 343.35 904.34 338.98 904.84 334.82 C905.34 330.66 905.92 324.84 906.34 322.34 C906.75 319.85 907.04 319.01 907.33 319.85 C907.63 320.68 907.79 323.17 908.08 327.33 C908.37 331.50 908.75 340.44 909.08 344.81 C909.42 349.18 909.75 352.71 910.08 353.55 C910.41 354.38 910.70 352.09 911.08 349.80 C911.45 347.51 911.87 343.56 912.33 339.82 C912.79 336.07 913.33 330.87 913.83 327.33 C914.32 323.80 914.87 320.55 915.32 318.60 C915.78 316.64 916.11 315.73 916.57 315.60 C917.03 315.48 917.61 318.18 918.07 317.85 C918.53 317.52 918.90 315.56 919.32 313.60 C919.73 311.65 920.15 308.20 920.57 306.12 C920.98 304.04 921.40 303.83 921.81 301.12 C922.23 298.42 922.60 293.63 923.06 289.89 C923.52 286.15 924.10 281.36 924.56 278.66 C925.02 275.95 925.43 273.04 925.81 273.66 C926.18 274.29 926.43 278.66 926.81 282.40 C927.18 286.15 927.68 294.67 928.05 296.13 C928.43 297.59 928.72 292.26 929.05 291.14 C929.39 290.01 929.76 287.52 930.05 289.39 C930.34 291.26 930.55 296.05 930.80 302.37 C931.05 308.70 931.30 319.64 931.55 327.33 C931.80 335.03 932.05 347.31 932.30 348.55 C932.55 349.80 932.80 342.52 933.05 334.82 C933.30 327.13 933.55 311.11 933.80 302.37 C934.05 293.63 934.25 287.19 934.54 282.40 C934.84 277.62 935.21 274.70 935.54 273.66 C935.88 272.62 936.21 275.20 936.54 276.16 C936.87 277.12 937.17 280.24 937.54 279.41 C937.91 278.57 938.33 275.24 938.79 271.17 C939.25 267.09 939.79 260.97 940.29 254.94 C940.79 248.91 941.49 240.66 941.78 234.97 C942.08 229.28 941.89 224.94 942.08 220.82 C942.26 216.70 942.57 212.69 942.90 210.24 C943.23 207.79 943.72 206.13 944.07 206.13 C944.43 206.13 944.68 207.79 945.01 210.24 C945.35 212.69 945.74 218.31 946.07 220.82 C946.41 223.33 946.70 225.28 947.01 225.28 C947.33 225.28 947.60 224.30 947.95 220.82 C948.31 217.33 948.70 209.46 949.13 204.36 C949.56 199.27 950.01 195.35 950.54 190.26 C951.07 185.17 951.81 177.82 952.30 173.81 C952.79 169.79 953.03 167.50 953.48 166.17 C953.93 164.83 954.61 166.89 955.00 165.81 C955.40 164.74 955.59 163.03 955.83 159.70 C956.06 156.37 956.12 151.27 956.42 145.82 C956.71 140.37 957.26 132.69 957.59 127.01 C957.92 121.33 958.16 114.77 958.41 111.73 C958.67 108.70 958.77 109.38 959.12 108.80 C959.47 108.21 960.16 109.09 960.53 108.21 C960.90 107.33 961.06 106.25 961.35 103.51 C961.65 100.76 961.98 93.95 962.29 91.75 C962.61 89.56 962.98 89.95 963.23 90.34 C963.49 90.73 963.62 90.93 963.82 94.10 C964.02 97.28 964.21 106.05 964.41 109.38 C964.60 112.71 964.80 113.69 965.00 114.08 C965.19 114.48 965.39 112.91 965.58 111.73 C965.78 110.56 966.02 107.82 966.17 107.03 C966.32 106.24 966.45 107.01 966.50 107.00" fill="none" stroke="#5050ff" stroke-width="1.15" stroke-linejoin="round"/>
<g transform="translate(79,561.8)" shape-rendering="crispEdges"><rect x="0" y="0" width="1.05" height="53.4" fill="#1f001f"/><rect x="1" y="0" width="1.05" height="53.4" fill="#1f001f"/><rect x="2" y="0" width="1.05" height="53.4" fill="#1d001d"/><rect x="3" y="0" width="1.05" height="53.4" fill="#180018"/><rect x="4" y="0" width="1.05" height="53.4" fill="#120012"/><rect x="5" y="0" width="1.05" height="53.4" fill="#0a000a"/><rect x="6" y="0" width="1.05" height="53.4" fill="#110011"/><rect x="7" y="0" width="1.05" height="53.4" fill="#160016"/><rect x="8" y="0" width="1.05" height="53.4" fill="#180018"/><rect x="9" y="0" width="1.05" height="53.4" fill="#140014"/><rect x="10" y="0" width="1.05" height="53.4" fill="#0f000f"/><rect x="11" y="0" width="1.05" height="53.4" fill="#120012"/><rect x="12" y="0" width="1.05" height="53.4" fill="#140014"/><rect x="13" y="0" width="1.05" height="53.4" fill="#130013"/><rect x="14" y="0" width="1.05" height="53.4" fill="#100010"/><rect x="15" y="0" width="1.05" height="53.4" fill="#0f000f"/><rect x="16" y="0" width="1.05" height="53.4" fill="#0e000e"/><rect x="17" y="0" width="1.05" height="53.4" fill="#0f000f"/><rect x="18" y="0" width="1.05" height="53.4" fill="#0e000e"/><rect x="19" y="0" width="1.05" height="53.4" fill="#0f000f"/><rect x="20" y="0" width="1.05" height="53.4" fill="#120012"/><rect x="21" y="0" width="1.05" height="53.4" fill="#140014"/><rect x="22" y="0" width="1.05" height="53.4" fill="#140014"/><rect x="23" y="0" width="1.05" height="53.4" fill="#120012"/><rect x="24" y="0" width="1.05" height="53.4" fill="#100010"/><rect x="25" y="0" width="1.05" height="53.4" fill="#100010"/><rect x="26" y="0" width="1.05" height="53.4" fill="#0f000f"/><rect x="27" y="0" width="1.05" height="53.4" fill="#0d000d"/><rect x="28" y="0" width="1.05" height="53.4" fill="#0f000f"/><rect x="29" y="0" width="1.05" height="53.4" fill="#0f000f"/><rect x="30" y="0" width="1.05" height="53.4" fill="#0f000f"/><rect x="31" y="0" width="1.05" height="53.4" fill="#100010"/><rect x="32" y="0" width="1.05" height="53.4" fill="#0d000d"/><rect x="33" y="0" width="1.05" height="53.4" fill="#0a000a"/><rect x="34" y="0" width="1.05" height="53.4" fill="#0a000a"/><rect x="35" y="0" width="1.05" height="53.4" fill="#0c000c"/><rect x="36" y="0" width="1.05" height="53.4" fill="#0b000c"/><rect x="37" y="0" width="1.05" height="53.4" fill="#0b000c"/><rect x="38" y="0" width="1.05" height="53.4" fill="#0c000c"/><rect x="39" y="0" width="1.05" height="53.4" fill="#0c000d"/><rect x="40" y="0" width="1.05" height="53.4" fill="#0d000e"/><rect x="41" y="0" width="1.05" height="53.4" fill="#0d000e"/><rect x="42" y="0" width="1.05" height="53.4" fill="#0d000d"/><rect x="43" y="0" width="1.05" height="53.4" fill="#0c000d"/><rect x="44" y="0" width="1.05" height="53.4" fill="#0c000d"/><rect x="45" y="0" width="1.05" height="53.4" fill="#0d000e"/><rect x="46" y="0" width="1.05" height="53.4" fill="#0d000f"/><rect x="47" y="0" width="1.05" height="53.4" fill="#0e000f"/><rect x="48" y="0" width="1.05" height="53.4" fill="#0c000e"/><rect x="49" y="0" width="1.05" height="53.4" fill="#0b000d"/><rect x="50" y="0" width="1.05" height="53.4" fill="#0c000e"/><rect x="51" y="0" width="1.05" height="53.4" fill="#0d000f"/><rect x="52" y="0" width="1.05" height="53.4" fill="#0c000e"/><rect x="53" y="0" width="1.05" height="53.4" fill="#0c000d"/><rect x="54" y="0" width="1.05" height="53.4" fill="#0c000e"/><rect x="55" y="0" width="1.05" height="53.4" fill="#0c000e"/><rect x="56" y="0" width="1.05" height="53.4" fill="#0c000e"/><rect x="57" y="0" width="1.05" height="53.4" fill="#0c000e"/><rect x="58" y="0" width="1.05" height="53.4" fill="#0c000e"/><rect x="59" y="0" width="1.05" height="53.4" fill="#0c000f"/><rect x="60" y="0" width="1.05" height="53.4" fill="#0c000e"/><rect x="61" y="0" width="1.05" height="53.4" fill="#0a000c"/><rect x="62" y="0" width="1.05" height="53.4" fill="#09000a"/><rect x="63" y="0" width="1.05" height="53.4" fill="#070009"/><rect x="64" y="0" width="1.05" height="53.4" fill="#060007"/><rect x="65" y="0" width="1.05" height="53.4" fill="#050006"/><rect x="66" y="0" width="1.05" height="53.4" fill="#060008"/><rect x="67" y="0" width="1.05" height="53.4" fill="#070009"/><rect x="68" y="0" width="1.05" height="53.4" fill="#08000a"/><rect x="69" y="0" width="1.05" height="53.4" fill="#09000b"/><rect x="70" y="0" width="1.05" height="53.4" fill="#08000a"/><rect x="71" y="0" width="1.05" height="53.4" fill="#070009"/><rect x="72" y="0" width="1.05" height="53.4" fill="#060008"/><rect x="73" y="0" width="1.05" height="53.4" fill="#050006"/><rect x="74" y="0" width="1.05" height="53.4" fill="#050006"/><rect x="75" y="0" width="1.05" height="53.4" fill="#060008"/><rect x="76" y="0" width="1.05" height="53.4" fill="#08000b"/><rect x="77" y="0" width="1.05" height="53.4" fill="#0a000d"/><rect x="78" y="0" width="1.05" height="53.4" fill="#0b000f"/><rect x="79" y="0" width="1.05" height="53.4" fill="#0b0010"/><rect x="80" y="0" width="1.05" height="53.4" fill="#0c0010"/><rect x="81" y="0" width="1.05" height="53.4" fill="#0c0011"/><rect x="82" y="0" width="1.05" height="53.4" fill="#0d0012"/><rect x="83" y="0" width="1.05" height="53.4" fill="#0d0012"/><rect x="84" y="0" width="1.05" height="53.4" fill="#0e0014"/><rect x="85" y="0" width="1.05" height="53.4" fill="#0f0015"/><rect x="86" y="0" width="1.05" height="53.4" fill="#0f0016"/><rect x="87" y="0" width="1.05" height="53.4" fill="#0f0016"/><rect x="88" y="0" width="1.05" height="53.4" fill="#0f0015"/><rect x="89" y="0" width="1.05" height="53.4" fill="#0e0015"/><rect x="90" y="0" width="1.05" height="53.4" fill="#0d0014"/><rect x="91" y="0" width="1.05" height="53.4" fill="#0d0013"/><rect x="92" y="0" width="1.05" height="53.4" fill="#0d0014"/><rect x="93" y="0" width="1.05" height="53.4" fill="#0e0015"/><rect x="94" y="0" width="1.05" height="53.4" fill="#0e0016"/><rect x="95" y="0" width="1.05" height="53.4" fill="#0f0016"/><rect x="96" y="0" width="1.05" height="53.4" fill="#0f0017"/><rect x="97" y="0" width="1.05" height="53.4" fill="#0f0018"/><rect x="98" y="0" width="1.05" height="53.4" fill="#0f0018"/><rect x="99" y="0" width="1.05" height="53.4" fill="#0f0018"/><rect x="100" y="0" width="1.05" height="53.4" fill="#0f0018"/><rect x="101" y="0" width="1.05" height="53.4" fill="#0f0018"/><rect x="102" y="0" width="1.05" height="53.4" fill="#0f0018"/><rect x="103" y="0" width="1.05" height="53.4" fill="#0f0018"/><rect x="104" y="0" width="1.05" height="53.4" fill="#0f0019"/><rect x="105" y="0" width="1.05" height="53.4" fill="#10001c"/><rect x="106" y="0" width="1.05" height="53.4" fill="#11001d"/><rect x="107" y="0" width="1.05" height="53.4" fill="#12001f"/><rect x="108" y="0" width="1.05" height="53.4" fill="#12001f"/><rect x="109" y="0" width="1.05" height="53.4" fill="#11001d"/><rect x="110" y="0" width="1.05" height="53.4" fill="#10001c"/><rect x="111" y="0" width="1.05" height="53.4" fill="#10001c"/><rect x="112" y="0" width="1.05" height="53.4" fill="#10001d"/><rect x="113" y="0" width="1.05" height="53.4" fill="#10001e"/><rect x="114" y="0" width="1.05" height="53.4" fill="#10001d"/><rect x="115" y="0" width="1.05" height="53.4" fill="#10001e"/><rect x="116" y="0" width="1.05" height="53.4" fill="#10001e"/><rect x="117" y="0" width="1.05" height="53.4" fill="#10001e"/><rect x="118" y="0" width="1.05" height="53.4" fill="#0f001e"/><rect x="119" y="0" width="1.05" height="53.4" fill="#0f001d"/><rect x="120" y="0" width="1.05" height="53.4" fill="#0e001d"/><rect x="121" y="0" width="1.05" height="53.4" fill="#0f001d"/><rect x="122" y="0" width="1.05" height="53.4" fill="#0f001f"/><rect x="123" y="0" width="1.05" height="53.4" fill="#0f001f"/><rect x="124" y="0" width="1.05" height="53.4" fill="#100022"/><rect x="125" y="0" width="1.05" height="53.4" fill="#110024"/><rect x="126" y="0" width="1.05" height="53.4" fill="#120025"/><rect x="127" y="0" width="1.05" height="53.4" fill="#110026"/><rect x="128" y="0" width="1.05" height="53.4" fill="#110025"/><rect x="129" y="0" width="1.05" height="53.4" fill="#100023"/><rect x="130" y="0" width="1.05" height="53.4" fill="#0f0021"/><rect x="131" y="0" width="1.05" height="53.4" fill="#0f0022"/><rect x="132" y="0" width="1.05" height="53.4" fill="#0f0024"/><rect x="133" y="0" width="1.05" height="53.4" fill="#100025"/><rect x="134" y="0" width="1.05" height="53.4" fill="#100026"/><rect x="135" y="0" width="1.05" height="53.4" fill="#0f0025"/><rect x="136" y="0" width="1.05" height="53.4" fill="#0f0024"/><rect x="137" y="0" width="1.05" height="53.4" fill="#0e0022"/><rect x="138" y="0" width="1.05" height="53.4" fill="#0d0021"/><rect x="139" y="0" width="1.05" height="53.4" fill="#0d0022"/><rect x="140" y="0" width="1.05" height="53.4" fill="#0d0022"/><rect x="141" y="0" width="1.05" height="53.4" fill="#0b001e"/><rect x="142" y="0" width="1.05" height="53.4" fill="#090019"/><rect x="143" y="0" width="1.05" height="53.4" fill="#070013"/><rect x="144" y="0" width="1.05" height="53.4" fill="#060010"/><rect x="145" y="0" width="1.05" height="53.4" fill="#050010"/><rect x="146" y="0" width="1.05" height="53.4" fill="#060013"/><rect x="147" y="0" width="1.05" height="53.4" fill="#09001b"/><rect x="148" y="0" width="1.05" height="53.4" fill="#0b0021"/><rect x="149" y="0" width="1.05" height="53.4" fill="#0c0024"/><rect x="150" y="0" width="1.05" height="53.4" fill="#0c0024"/><rect x="151" y="0" width="1.05" height="53.4" fill="#0a0021"/><rect x="152" y="0" width="1.05" height="53.4" fill="#09001d"/><rect x="153" y="0" width="1.05" height="53.4" fill="#0a0020"/><rect x="154" y="0" width="1.05" height="53.4" fill="#0a0024"/><rect x="155" y="0" width="1.05" height="53.4" fill="#0b0025"/><rect x="156" y="0" width="1.05" height="53.4" fill="#0a0022"/><rect x="157" y="0" width="1.05" height="53.4" fill="#08001f"/><rect x="158" y="0" width="1.05" height="53.4" fill="#090020"/><rect x="159" y="0" width="1.05" height="53.4" fill="#090023"/><rect x="160" y="0" width="1.05" height="53.4" fill="#080021"/><rect x="161" y="0" width="1.05" height="53.4" fill="#08001f"/><rect x="162" y="0" width="1.05" height="53.4" fill="#07001f"/><rect x="163" y="0" width="1.05" height="53.4" fill="#080021"/><rect x="164" y="0" width="1.05" height="53.4" fill="#070021"/><rect x="165" y="0" width="1.05" height="53.4" fill="#07001f"/><rect x="166" y="0" width="1.05" height="53.4" fill="#070020"/><rect x="167" y="0" width="1.05" height="53.4" fill="#070024"/><rect x="168" y="0" width="1.05" height="53.4" fill="#080028"/><rect x="169" y="0" width="1.05" height="53.4" fill="#08002b"/><rect x="170" y="0" width="1.05" height="53.4" fill="#07002a"/><rect x="171" y="0" width="1.05" height="53.4" fill="#07002a"/><rect x="172" y="0" width="1.05" height="53.4" fill="#07002e"/><rect x="173" y="0" width="1.05" height="53.4" fill="#070030"/><rect x="174" y="0" width="1.05" height="53.4" fill="#070030"/><rect x="175" y="0" width="1.05" height="53.4" fill="#06002d"/><rect x="176" y="0" width="1.05" height="53.4" fill="#06002c"/><rect x="177" y="0" width="1.05" height="53.4" fill="#06002d"/><rect x="178" y="0" width="1.05" height="53.4" fill="#05002d"/><rect x="179" y="0" width="1.05" height="53.4" fill="#05002b"/><rect x="180" y="0" width="1.05" height="53.4" fill="#04002e"/><rect x="181" y="0" width="1.05" height="53.4" fill="#04002f"/><rect x="182" y="0" width="1.05" height="53.4" fill="#040030"/><rect x="183" y="0" width="1.05" height="53.4" fill="#03002f"/><rect x="184" y="0" width="1.05" height="53.4" fill="#03002e"/><rect x="185" y="0" width="1.05" height="53.4" fill="#02002c"/><rect x="186" y="0" width="1.05" height="53.4" fill="#020029"/><rect x="187" y="0" width="1.05" height="53.4" fill="#010026"/><rect x="188" y="0" width="1.05" height="53.4" fill="#000029"/><rect x="189" y="0" width="1.05" height="53.4" fill="#00002b"/><rect x="190" y="0" width="1.05" height="53.4" fill="#00012d"/><rect x="191" y="0" width="1.05" height="53.4" fill="#00022b"/><rect x="192" y="0" width="1.05" height="53.4" fill="#000228"/><rect x="193" y="0" width="1.05" height="53.4" fill="#000327"/><rect x="194" y="0" width="1.05" height="53.4" fill="#00032c"/><rect x="195" y="0" width="1.05" height="53.4" fill="#00042f"/><rect x="196" y="0" width="1.05" height="53.4" fill="#00052f"/><rect x="197" y="0" width="1.05" height="53.4" fill="#00052e"/><rect x="198" y="0" width="1.05" height="53.4" fill="#00052c"/><rect x="199" y="0" width="1.05" height="53.4" fill="#00052b"/><rect x="200" y="0" width="1.05" height="53.4" fill="#00062a"/><rect x="201" y="0" width="1.05" height="53.4" fill="#00062a"/><rect x="202" y="0" width="1.05" height="53.4" fill="#00072c"/><rect x="203" y="0" width="1.05" height="53.4" fill="#000830"/><rect x="204" y="0" width="1.05" height="53.4" fill="#000932"/><rect x="205" y="0" width="1.05" height="53.4" fill="#000930"/><rect x="206" y="0" width="1.05" height="53.4" fill="#00092c"/><rect x="207" y="0" width="1.05" height="53.4" fill="#000828"/><rect x="208" y="0" width="1.05" height="53.4" fill="#000827"/><rect x="209" y="0" width="1.05" height="53.4" fill="#000927"/><rect x="210" y="0" width="1.05" height="53.4" fill="#000929"/><rect x="211" y="0" width="1.05" height="53.4" fill="#000a2c"/><rect x="212" y="0" width="1.05" height="53.4" fill="#000b2e"/><rect x="213" y="0" width="1.05" height="53.4" fill="#000c2f"/><rect x="214" y="0" width="1.05" height="53.4" fill="#000d30"/><rect x="215" y="0" width="1.05" height="53.4" fill="#000d30"/><rect x="216" y="0" width="1.05" height="53.4" fill="#000d2f"/><rect x="217" y="0" width="1.05" height="53.4" fill="#000e30"/><rect x="218" y="0" width="1.05" height="53.4" fill="#000f31"/><rect x="219" y="0" width="1.05" height="53.4" fill="#000f32"/><rect x="220" y="0" width="1.05" height="53.4" fill="#000f2f"/><rect x="221" y="0" width="1.05" height="53.4" fill="#000f2e"/><rect x="222" y="0" width="1.05" height="53.4" fill="#000f2f"/><rect x="223" y="0" width="1.05" height="53.4" fill="#001030"/><rect x="224" y="0" width="1.05" height="53.4" fill="#001030"/><rect x="225" y="0" width="1.05" height="53.4" fill="#00102c"/><rect x="226" y="0" width="1.05" height="53.4" fill="#000f2a"/><rect x="227" y="0" width="1.05" height="53.4" fill="#00102b"/><rect x="228" y="0" width="1.05" height="53.4" fill="#00112e"/><rect x="229" y="0" width="1.05" height="53.4" fill="#001332"/><rect x="230" y="0" width="1.05" height="53.4" fill="#001331"/><rect x="231" y="0" width="1.05" height="53.4" fill="#00132f"/><rect x="232" y="0" width="1.05" height="53.4" fill="#00132f"/><rect x="233" y="0" width="1.05" height="53.4" fill="#001534"/><rect x="234" y="0" width="1.05" height="53.4" fill="#001838"/><rect x="235" y="0" width="1.05" height="53.4" fill="#001a3c"/><rect x="236" y="0" width="1.05" height="53.4" fill="#001b3e"/><rect x="237" y="0" width="1.05" height="53.4" fill="#001c3f"/><rect x="238" y="0" width="1.05" height="53.4" fill="#001c3e"/><rect x="239" y="0" width="1.05" height="53.4" fill="#001b3c"/><rect x="240" y="0" width="1.05" height="53.4" fill="#001936"/><rect x="241" y="0" width="1.05" height="53.4" fill="#00162e"/><rect x="242" y="0" width="1.05" height="53.4" fill="#001429"/><rect x="243" y="0" width="1.05" height="53.4" fill="#001328"/><rect x="244" y="0" width="1.05" height="53.4" fill="#001429"/><rect x="245" y="0" width="1.05" height="53.4" fill="#00162c"/><rect x="246" y="0" width="1.05" height="53.4" fill="#00182f"/><rect x="247" y="0" width="1.05" height="53.4" fill="#001c36"/><rect x="248" y="0" width="1.05" height="53.4" fill="#001f3b"/><rect x="249" y="0" width="1.05" height="53.4" fill="#00213e"/><rect x="250" y="0" width="1.05" height="53.4" fill="#00213e"/><rect x="251" y="0" width="1.05" height="53.4" fill="#001f39"/><rect x="252" y="0" width="1.05" height="53.4" fill="#001b31"/><rect x="253" y="0" width="1.05" height="53.4" fill="#00172a"/><rect x="254" y="0" width="1.05" height="53.4" fill="#001627"/><rect x="255" y="0" width="1.05" height="53.4" fill="#001526"/><rect x="256" y="0" width="1.05" height="53.4" fill="#001626"/><rect x="257" y="0" width="1.05" height="53.4" fill="#001727"/><rect x="258" y="0" width="1.05" height="53.4" fill="#00192a"/><rect x="259" y="0" width="1.05" height="53.4" fill="#001b2e"/><rect x="260" y="0" width="1.05" height="53.4" fill="#001e32"/><rect x="261" y="0" width="1.05" height="53.4" fill="#002035"/><rect x="262" y="0" width="1.05" height="53.4" fill="#002033"/><rect x="263" y="0" width="1.05" height="53.4" fill="#001c2e"/><rect x="264" y="0" width="1.05" height="53.4" fill="#001a2a"/><rect x="265" y="0" width="1.05" height="53.4" fill="#001a29"/><rect x="266" y="0" width="1.05" height="53.4" fill="#001b29"/><rect x="267" y="0" width="1.05" height="53.4" fill="#001c2b"/><rect x="268" y="0" width="1.05" height="53.4" fill="#001e2d"/><rect x="269" y="0" width="1.05" height="53.4" fill="#002132"/><rect x="270" y="0" width="1.05" height="53.4" fill="#002436"/><rect x="271" y="0" width="1.05" height="53.4" fill="#002638"/><rect x="272" y="0" width="1.05" height="53.4" fill="#002739"/><rect x="273" y="0" width="1.05" height="53.4" fill="#002839"/><rect x="274" y="0" width="1.05" height="53.4" fill="#002738"/><rect x="275" y="0" width="1.05" height="53.4" fill="#002637"/><rect x="276" y="0" width="1.05" height="53.4" fill="#002636"/><rect x="277" y="0" width="1.05" height="53.4" fill="#002737"/><rect x="278" y="0" width="1.05" height="53.4" fill="#002938"/><rect x="279" y="0" width="1.05" height="53.4" fill="#002939"/><rect x="280" y="0" width="1.05" height="53.4" fill="#002a3a"/><rect x="281" y="0" width="1.05" height="53.4" fill="#002b3a"/><rect x="282" y="0" width="1.05" height="53.4" fill="#002d3c"/><rect x="283" y="0" width="1.05" height="53.4" fill="#002f3f"/><rect x="284" y="0" width="1.05" height="53.4" fill="#003242"/><rect x="285" y="0" width="1.05" height="53.4" fill="#003545"/><rect x="286" y="0" width="1.05" height="53.4" fill="#003646"/><rect x="287" y="0" width="1.05" height="53.4" fill="#003443"/><rect x="288" y="0" width="1.05" height="53.4" fill="#002833"/><rect x="289" y="0" width="1.05" height="53.4" fill="#001d25"/><rect x="290" y="0" width="1.05" height="53.4" fill="#00191f"/><rect x="291" y="0" width="1.05" height="53.4" fill="#001b21"/><rect x="292" y="0" width="1.05" height="53.4" fill="#001d24"/><rect x="293" y="0" width="1.05" height="53.4" fill="#001f26"/><rect x="294" y="0" width="1.05" height="53.4" fill="#001f26"/><rect x="295" y="0" width="1.05" height="53.4" fill="#002128"/><rect x="296" y="0" width="1.05" height="53.4" fill="#00262d"/><rect x="297" y="0" width="1.05" height="53.4" fill="#002a32"/><rect x="298" y="0" width="1.05" height="53.4" fill="#002b33"/><rect x="299" y="0" width="1.05" height="53.4" fill="#002931"/><rect x="300" y="0" width="1.05" height="53.4" fill="#002329"/><rect x="301" y="0" width="1.05" height="53.4" fill="#001f24"/><rect x="302" y="0" width="1.05" height="53.4" fill="#002125"/><rect x="303" y="0" width="1.05" height="53.4" fill="#002328"/><rect x="304" y="0" width="1.05" height="53.4" fill="#00262b"/><rect x="305" y="0" width="1.05" height="53.4" fill="#00272c"/><rect x="306" y="0" width="1.05" height="53.4" fill="#00282d"/><rect x="307" y="0" width="1.05" height="53.4" fill="#002b2f"/><rect x="308" y="0" width="1.05" height="53.4" fill="#002d32"/><rect x="309" y="0" width="1.05" height="53.4" fill="#002f33"/><rect x="310" y="0" width="1.05" height="53.4" fill="#002d31"/><rect x="311" y="0" width="1.05" height="53.4" fill="#002b2f"/><rect x="312" y="0" width="1.05" height="53.4" fill="#00292c"/><rect x="313" y="0" width="1.05" height="53.4" fill="#00282b"/><rect x="314" y="0" width="1.05" height="53.4" fill="#00292b"/><rect x="315" y="0" width="1.05" height="53.4" fill="#002a2c"/><rect x="316" y="0" width="1.05" height="53.4" fill="#002c2e"/><rect x="317" y="0" width="1.05" height="53.4" fill="#002f31"/><rect x="318" y="0" width="1.05" height="53.4" fill="#003334"/><rect x="319" y="0" width="1.05" height="53.4" fill="#003637"/><rect x="320" y="0" width="1.05" height="53.4" fill="#003839"/><rect x="321" y="0" width="1.05" height="53.4" fill="#003b3b"/><rect x="322" y="0" width="1.05" height="53.4" fill="#003c3d"/><rect x="323" y="0" width="1.05" height="53.4" fill="#003f3f"/><rect x="324" y="0" width="1.05" height="53.4" fill="#004241"/><rect x="325" y="0" width="1.05" height="53.4" fill="#004644"/><rect x="326" y="0" width="1.05" height="53.4" fill="#004946"/><rect x="327" y="0" width="1.05" height="53.4" fill="#004d48"/><rect x="328" y="0" width="1.05" height="53.4" fill="#004f49"/><rect x="329" y="0" width="1.05" height="53.4" fill="#00524a"/><rect x="330" y="0" width="1.05" height="53.4" fill="#005249"/><rect x="331" y="0" width="1.05" height="53.4" fill="#00544a"/><rect x="332" y="0" width="1.05" height="53.4" fill="#005a4e"/><rect x="333" y="0" width="1.05" height="53.4" fill="#006052"/><rect x="334" y="0" width="1.05" height="53.4" fill="#006252"/><rect x="335" y="0" width="1.05" height="53.4" fill="#006150"/><rect x="336" y="0" width="1.05" height="53.4" fill="#006551"/><rect x="337" y="0" width="1.05" height="53.4" fill="#006952"/><rect x="338" y="0" width="1.05" height="53.4" fill="#006c53"/><rect x="339" y="0" width="1.05" height="53.4" fill="#00624a"/><rect x="340" y="0" width="1.05" height="53.4" fill="#004432"/><rect x="341" y="0" width="1.05" height="53.4" fill="#002c20"/><rect x="342" y="0" width="1.05" height="53.4" fill="#002319"/><rect x="343" y="0" width="1.05" height="53.4" fill="#002218"/><rect x="344" y="0" width="1.05" height="53.4" fill="#002519"/><rect x="345" y="0" width="1.05" height="53.4" fill="#00271a"/><rect x="346" y="0" width="1.05" height="53.4" fill="#00291a"/><rect x="347" y="0" width="1.05" height="53.4" fill="#00291a"/><rect x="348" y="0" width="1.05" height="53.4" fill="#002d1b"/><rect x="349" y="0" width="1.05" height="53.4" fill="#00301c"/><rect x="350" y="0" width="1.05" height="53.4" fill="#00321d"/><rect x="351" y="0" width="1.05" height="53.4" fill="#00301b"/><rect x="352" y="0" width="1.05" height="53.4" fill="#002b17"/><rect x="353" y="0" width="1.05" height="53.4" fill="#002815"/><rect x="354" y="0" width="1.05" height="53.4" fill="#002713"/><rect x="355" y="0" width="1.05" height="53.4" fill="#002613"/><rect x="356" y="0" width="1.05" height="53.4" fill="#002812"/><rect x="357" y="0" width="1.05" height="53.4" fill="#002a13"/><rect x="358" y="0" width="1.05" height="53.4" fill="#002d14"/><rect x="359" y="0" width="1.05" height="53.4" fill="#003114"/><rect x="360" y="0" width="1.05" height="53.4" fill="#003415"/><rect x="361" y="0" width="1.05" height="53.4" fill="#003815"/><rect x="362" y="0" width="1.05" height="53.4" fill="#003b15"/><rect x="363" y="0" width="1.05" height="53.4" fill="#003f15"/><rect x="364" y="0" width="1.05" height="53.4" fill="#004315"/><rect x="365" y="0" width="1.05" height="53.4" fill="#004414"/><rect x="366" y="0" width="1.05" height="53.4" fill="#004513"/><rect x="367" y="0" width="1.05" height="53.4" fill="#004812"/><rect x="368" y="0" width="1.05" height="53.4" fill="#004a11"/><rect x="369" y="0" width="1.05" height="53.4" fill="#004b10"/><rect x="370" y="0" width="1.05" height="53.4" fill="#004c0f"/><rect x="371" y="0" width="1.05" height="53.4" fill="#004f0d"/><rect x="372" y="0" width="1.05" height="53.4" fill="#00500c"/><rect x="373" y="0" width="1.05" height="53.4" fill="#004e09"/><rect x="374" y="0" width="1.05" height="53.4" fill="#004f07"/><rect x="375" y="0" width="1.05" height="53.4" fill="#005205"/><rect x="376" y="0" width="1.05" height="53.4" fill="#005603"/><rect x="377" y="0" width="1.05" height="53.4" fill="#005800"/><rect x="378" y="0" width="1.05" height="53.4" fill="#025800"/><rect x="379" y="0" width="1.05" height="53.4" fill="#025700"/><rect x="380" y="0" width="1.05" height="53.4" fill="#035700"/><rect x="381" y="0" width="1.05" height="53.4" fill="#045900"/><rect x="382" y="0" width="1.05" height="53.4" fill="#055d00"/><rect x="383" y="0" width="1.05" height="53.4" fill="#066100"/><rect x="384" y="0" width="1.05" height="53.4" fill="#076300"/><rect x="385" y="0" width="1.05" height="53.4" fill="#086000"/><rect x="386" y="0" width="1.05" height="53.4" fill="#096100"/><rect x="387" y="0" width="1.05" height="53.4" fill="#0a6500"/><rect x="388" y="0" width="1.05" height="53.4" fill="#0b6800"/><rect x="389" y="0" width="1.05" height="53.4" fill="#0c6800"/><rect x="390" y="0" width="1.05" height="53.4" fill="#0c6600"/><rect x="391" y="0" width="1.05" height="53.4" fill="#0d6300"/><rect x="392" y="0" width="1.05" height="53.4" fill="#0d6200"/><rect x="393" y="0" width="1.05" height="53.4" fill="#0e6500"/><rect x="394" y="0" width="1.05" height="53.4" fill="#106c00"/><rect x="395" y="0" width="1.05" height="53.4" fill="#127200"/><rect x="396" y="0" width="1.05" height="53.4" fill="#116900"/><rect x="397" y="0" width="1.05" height="53.4" fill="#0b4000"/><rect x="398" y="0" width="1.05" height="53.4" fill="#072700"/><rect x="399" y="0" width="1.05" height="53.4" fill="#062400"/><rect x="400" y="0" width="1.05" height="53.4" fill="#072500"/><rect x="401" y="0" width="1.05" height="53.4" fill="#082700"/><rect x="402" y="0" width="1.05" height="53.4" fill="#092b00"/><rect x="403" y="0" width="1.05" height="53.4" fill="#0a2e00"/><rect x="404" y="0" width="1.05" height="53.4" fill="#0b3100"/><rect x="405" y="0" width="1.05" height="53.4" fill="#0c3500"/><rect x="406" y="0" width="1.05" height="53.4" fill="#0c3600"/><rect x="407" y="0" width="1.05" height="53.4" fill="#0c3300"/><rect x="408" y="0" width="1.05" height="53.4" fill="#0c3400"/><rect x="409" y="0" width="1.05" height="53.4" fill="#0f3c00"/><rect x="410" y="0" width="1.05" height="53.4" fill="#104100"/><rect x="411" y="0" width="1.05" height="53.4" fill="#114400"/><rect x="412" y="0" width="1.05" height="53.4" fill="#124600"/><rect x="413" y="0" width="1.05" height="53.4" fill="#144b00"/><rect x="414" y="0" width="1.05" height="53.4" fill="#165200"/><rect x="415" y="0" width="1.05" height="53.4" fill="#175400"/><rect x="416" y="0" width="1.05" height="53.4" fill="#175000"/><rect x="417" y="0" width="1.05" height="53.4" fill="#154900"/><rect x="418" y="0" width="1.05" height="53.4" fill="#144500"/><rect x="419" y="0" width="1.05" height="53.4" fill="#154500"/><rect x="420" y="0" width="1.05" height="53.4" fill="#174a00"/><rect x="421" y="0" width="1.05" height="53.4" fill="#194e00"/><rect x="422" y="0" width="1.05" height="53.4" fill="#184c00"/><rect x="423" y="0" width="1.05" height="53.4" fill="#174800"/><rect x="424" y="0" width="1.05" height="53.4" fill="#184800"/><rect x="425" y="0" width="1.05" height="53.4" fill="#1b4f00"/><rect x="426" y="0" width="1.05" height="53.4" fill="#1e5700"/><rect x="427" y="0" width="1.05" height="53.4" fill="#205b00"/><rect x="428" y="0" width="1.05" height="53.4" fill="#225f00"/><rect x="429" y="0" width="1.05" height="53.4" fill="#246300"/><rect x="430" y="0" width="1.05" height="53.4" fill="#256500"/><rect x="431" y="0" width="1.05" height="53.4" fill="#256400"/><rect x="432" y="0" width="1.05" height="53.4" fill="#256400"/><rect x="433" y="0" width="1.05" height="53.4" fill="#276700"/><rect x="434" y="0" width="1.05" height="53.4" fill="#286800"/><rect x="435" y="0" width="1.05" height="53.4" fill="#276500"/><rect x="436" y="0" width="1.05" height="53.4" fill="#276200"/><rect x="437" y="0" width="1.05" height="53.4" fill="#276200"/><rect x="438" y="0" width="1.05" height="53.4" fill="#286200"/><rect x="439" y="0" width="1.05" height="53.4" fill="#275e00"/><rect x="440" y="0" width="1.05" height="53.4" fill="#265b00"/><rect x="441" y="0" width="1.05" height="53.4" fill="#285f00"/><rect x="442" y="0" width="1.05" height="53.4" fill="#2a6200"/><rect x="443" y="0" width="1.05" height="53.4" fill="#2b6300"/><rect x="444" y="0" width="1.05" height="53.4" fill="#2c6300"/><rect x="445" y="0" width="1.05" height="53.4" fill="#2e6800"/><rect x="446" y="0" width="1.05" height="53.4" fill="#326f00"/><rect x="447" y="0" width="1.05" height="53.4" fill="#347300"/><rect x="448" y="0" width="1.05" height="53.4" fill="#337000"/><rect x="449" y="0" width="1.05" height="53.4" fill="#316900"/><rect x="450" y="0" width="1.05" height="53.4" fill="#2f6400"/><rect x="451" y="0" width="1.05" height="53.4" fill="#2e6100"/><rect x="452" y="0" width="1.05" height="53.4" fill="#306400"/><rect x="453" y="0" width="1.05" height="53.4" fill="#346a00"/><rect x="454" y="0" width="1.05" height="53.4" fill="#366f00"/><rect x="455" y="0" width="1.05" height="53.4" fill="#376f00"/><rect x="456" y="0" width="1.05" height="53.4" fill="#366b00"/><rect x="457" y="0" width="1.05" height="53.4" fill="#356800"/><rect x="458" y="0" width="1.05" height="53.4" fill="#356900"/><rect x="459" y="0" width="1.05" height="53.4" fill="#376b00"/><rect x="460" y="0" width="1.05" height="53.4" fill="#386b00"/><rect x="461" y="0" width="1.05" height="53.4" fill="#376800"/><rect x="462" y="0" width="1.05" height="53.4" fill="#386900"/><rect x="463" y="0" width="1.05" height="53.4" fill="#3c7000"/><rect x="464" y="0" width="1.05" height="53.4" fill="#407600"/><rect x="465" y="0" width="1.05" height="53.4" fill="#417700"/><rect x="466" y="0" width="1.05" height="53.4" fill="#417600"/><rect x="467" y="0" width="1.05" height="53.4" fill="#3f7100"/><rect x="468" y="0" width="1.05" height="53.4" fill="#3e6f00"/><rect x="469" y="0" width="1.05" height="53.4" fill="#437600"/><rect x="470" y="0" width="1.05" height="53.4" fill="#487e00"/><rect x="471" y="0" width="1.05" height="53.4" fill="#427400"/><rect x="472" y="0" width="1.05" height="53.4" fill="#2e5000"/><rect x="473" y="0" width="1.05" height="53.4" fill="#253f00"/><rect x="474" y="0" width="1.05" height="53.4" fill="#233b00"/><rect x="475" y="0" width="1.05" height="53.4" fill="#253e00"/><rect x="476" y="0" width="1.05" height="53.4" fill="#284200"/><rect x="477" y="0" width="1.05" height="53.4" fill="#2a4500"/><rect x="478" y="0" width="1.05" height="53.4" fill="#2b4700"/><rect x="479" y="0" width="1.05" height="53.4" fill="#2d4900"/><rect x="480" y="0" width="1.05" height="53.4" fill="#2f4c00"/><rect x="481" y="0" width="1.05" height="53.4" fill="#325000"/><rect x="482" y="0" width="1.05" height="53.4" fill="#345200"/><rect x="483" y="0" width="1.05" height="53.4" fill="#345300"/><rect x="484" y="0" width="1.05" height="53.4" fill="#335000"/><rect x="485" y="0" width="1.05" height="53.4" fill="#2f4a00"/><rect x="486" y="0" width="1.05" height="53.4" fill="#2d4600"/><rect x="487" y="0" width="1.05" height="53.4" fill="#2e4700"/><rect x="488" y="0" width="1.05" height="53.4" fill="#304a00"/><rect x="489" y="0" width="1.05" height="53.4" fill="#334d00"/><rect x="490" y="0" width="1.05" height="53.4" fill="#375200"/><rect x="491" y="0" width="1.05" height="53.4" fill="#395500"/><rect x="492" y="0" width="1.05" height="53.4" fill="#3a5700"/><rect x="493" y="0" width="1.05" height="53.4" fill="#3b5600"/><rect x="494" y="0" width="1.05" height="53.4" fill="#3b5700"/><rect x="495" y="0" width="1.05" height="53.4" fill="#3d5900"/><rect x="496" y="0" width="1.05" height="53.4" fill="#405c00"/><rect x="497" y="0" width="1.05" height="53.4" fill="#425e00"/><rect x="498" y="0" width="1.05" height="53.4" fill="#425e00"/><rect x="499" y="0" width="1.05" height="53.4" fill="#425e00"/><rect x="500" y="0" width="1.05" height="53.4" fill="#425c00"/><rect x="501" y="0" width="1.05" height="53.4" fill="#415a00"/><rect x="502" y="0" width="1.05" height="53.4" fill="#415a00"/><rect x="503" y="0" width="1.05" height="53.4" fill="#415a00"/><rect x="504" y="0" width="1.05" height="53.4" fill="#405800"/><rect x="505" y="0" width="1.05" height="53.4" fill="#405700"/><rect x="506" y="0" width="1.05" height="53.4" fill="#415700"/><rect x="507" y="0" width="1.05" height="53.4" fill="#425800"/><rect x="508" y="0" width="1.05" height="53.4" fill="#425800"/><rect x="509" y="0" width="1.05" height="53.4" fill="#415700"/><rect x="510" y="0" width="1.05" height="53.4" fill="#405500"/><rect x="511" y="0" width="1.05" height="53.4" fill="#3e5100"/><rect x="512" y="0" width="1.05" height="53.4" fill="#394b00"/><rect x="513" y="0" width="1.05" height="53.4" fill="#364500"/><rect x="514" y="0" width="1.05" height="53.4" fill="#364500"/><rect x="515" y="0" width="1.05" height="53.4" fill="#374600"/><rect x="516" y="0" width="1.05" height="53.4" fill="#374600"/><rect x="517" y="0" width="1.05" height="53.4" fill="#364400"/><rect x="518" y="0" width="1.05" height="53.4" fill="#354300"/><rect x="519" y="0" width="1.05" height="53.4" fill="#354200"/><rect x="520" y="0" width="1.05" height="53.4" fill="#354200"/><rect x="521" y="0" width="1.05" height="53.4" fill="#364200"/><rect x="522" y="0" width="1.05" height="53.4" fill="#364300"/><rect x="523" y="0" width="1.05" height="53.4" fill="#374300"/><rect x="524" y="0" width="1.05" height="53.4" fill="#384500"/><rect x="525" y="0" width="1.05" height="53.4" fill="#3b4800"/><rect x="526" y="0" width="1.05" height="53.4" fill="#404d00"/><rect x="527" y="0" width="1.05" height="53.4" fill="#435000"/><rect x="528" y="0" width="1.05" height="53.4" fill="#445100"/><rect x="529" y="0" width="1.05" height="53.4" fill="#424e00"/><rect x="530" y="0" width="1.05" height="53.4" fill="#404b00"/><rect x="531" y="0" width="1.05" height="53.4" fill="#3e4900"/><rect x="532" y="0" width="1.05" height="53.4" fill="#404b00"/><rect x="533" y="0" width="1.05" height="53.4" fill="#434e00"/><rect x="534" y="0" width="1.05" height="53.4" fill="#475200"/><rect x="535" y="0" width="1.05" height="53.4" fill="#4a5500"/><rect x="536" y="0" width="1.05" height="53.4" fill="#4b5600"/><rect x="537" y="0" width="1.05" height="53.4" fill="#4c5600"/><rect x="538" y="0" width="1.05" height="53.4" fill="#4d5700"/><rect x="539" y="0" width="1.05" height="53.4" fill="#4e5800"/><rect x="540" y="0" width="1.05" height="53.4" fill="#505900"/><rect x="541" y="0" width="1.05" height="53.4" fill="#525b00"/><rect x="542" y="0" width="1.05" height="53.4" fill="#535c00"/><rect x="543" y="0" width="1.05" height="53.4" fill="#535b00"/><rect x="544" y="0" width="1.05" height="53.4" fill="#535b00"/><rect x="545" y="0" width="1.05" height="53.4" fill="#535b00"/><rect x="546" y="0" width="1.05" height="53.4" fill="#545b00"/><rect x="547" y="0" width="1.05" height="53.4" fill="#565d00"/><rect x="548" y="0" width="1.05" height="53.4" fill="#575e00"/><rect x="549" y="0" width="1.05" height="53.4" fill="#585f00"/><rect x="550" y="0" width="1.05" height="53.4" fill="#5a6100"/><rect x="551" y="0" width="1.05" height="53.4" fill="#5f6500"/><rect x="552" y="0" width="1.05" height="53.4" fill="#646900"/><rect x="553" y="0" width="1.05" height="53.4" fill="#666b00"/><rect x="554" y="0" width="1.05" height="53.4" fill="#656a00"/><rect x="555" y="0" width="1.05" height="53.4" fill="#5f6300"/><rect x="556" y="0" width="1.05" height="53.4" fill="#585b00"/><rect x="557" y="0" width="1.05" height="53.4" fill="#555800"/><rect x="558" y="0" width="1.05" height="53.4" fill="#575900"/><rect x="559" y="0" width="1.05" height="53.4" fill="#5a5c00"/><rect x="560" y="0" width="1.05" height="53.4" fill="#5c5e00"/><rect x="561" y="0" width="1.05" height="53.4" fill="#5d5f00"/><rect x="562" y="0" width="1.05" height="53.4" fill="#5f6100"/><rect x="563" y="0" width="1.05" height="53.4" fill="#636400"/><rect x="564" y="0" width="1.05" height="53.4" fill="#696a00"/><rect x="565" y="0" width="1.05" height="53.4" fill="#717000"/><rect x="566" y="0" width="1.05" height="53.4" fill="#767500"/><rect x="567" y="0" width="1.05" height="53.4" fill="#787700"/><rect x="568" y="0" width="1.05" height="53.4" fill="#757400"/><rect x="569" y="0" width="1.05" height="53.4" fill="#6a6800"/><rect x="570" y="0" width="1.05" height="53.4" fill="#615f00"/><rect x="571" y="0" width="1.05" height="53.4" fill="#5c5900"/><rect x="572" y="0" width="1.05" height="53.4" fill="#5c5900"/><rect x="573" y="0" width="1.05" height="53.4" fill="#5e5a00"/><rect x="574" y="0" width="1.05" height="53.4" fill="#625d00"/><rect x="575" y="0" width="1.05" height="53.4" fill="#635f00"/><rect x="576" y="0" width="1.05" height="53.4" fill="#645f00"/><rect x="577" y="0" width="1.05" height="53.4" fill="#625d00"/><rect x="578" y="0" width="1.05" height="53.4" fill="#5f5900"/><rect x="579" y="0" width="1.05" height="53.4" fill="#554f00"/><rect x="580" y="0" width="1.05" height="53.4" fill="#4a4500"/><rect x="581" y="0" width="1.05" height="53.4" fill="#474100"/><rect x="582" y="0" width="1.05" height="53.4" fill="#464000"/><rect x="583" y="0" width="1.05" height="53.4" fill="#453f00"/><rect x="584" y="0" width="1.05" height="53.4" fill="#443e00"/><rect x="585" y="0" width="1.05" height="53.4" fill="#423c00"/><rect x="586" y="0" width="1.05" height="53.4" fill="#3f3900"/><rect x="587" y="0" width="1.05" height="53.4" fill="#3e3700"/><rect x="588" y="0" width="1.05" height="53.4" fill="#3d3700"/><rect x="589" y="0" width="1.05" height="53.4" fill="#3b3500"/><rect x="590" y="0" width="1.05" height="53.4" fill="#383200"/><rect x="591" y="0" width="1.05" height="53.4" fill="#373000"/><rect x="592" y="0" width="1.05" height="53.4" fill="#362f00"/><rect x="593" y="0" width="1.05" height="53.4" fill="#352e00"/><rect x="594" y="0" width="1.05" height="53.4" fill="#352e00"/><rect x="595" y="0" width="1.05" height="53.4" fill="#352e00"/><rect x="596" y="0" width="1.05" height="53.4" fill="#362e00"/><rect x="597" y="0" width="1.05" height="53.4" fill="#372f00"/><rect x="598" y="0" width="1.05" height="53.4" fill="#382f00"/><rect x="599" y="0" width="1.05" height="53.4" fill="#393000"/><rect x="600" y="0" width="1.05" height="53.4" fill="#3b3100"/><rect x="601" y="0" width="1.05" height="53.4" fill="#3d3300"/><rect x="602" y="0" width="1.05" height="53.4" fill="#3f3400"/><rect x="603" y="0" width="1.05" height="53.4" fill="#413500"/><rect x="604" y="0" width="1.05" height="53.4" fill="#423600"/><rect x="605" y="0" width="1.05" height="53.4" fill="#423500"/><rect x="606" y="0" width="1.05" height="53.4" fill="#413400"/><rect x="607" y="0" width="1.05" height="53.4" fill="#3f3300"/><rect x="608" y="0" width="1.05" height="53.4" fill="#3f3200"/><rect x="609" y="0" width="1.05" height="53.4" fill="#413300"/><rect x="610" y="0" width="1.05" height="53.4" fill="#423400"/><rect x="611" y="0" width="1.05" height="53.4" fill="#443500"/><rect x="612" y="0" width="1.05" height="53.4" fill="#453600"/><rect x="613" y="0" width="1.05" height="53.4" fill="#463600"/><rect x="614" y="0" width="1.05" height="53.4" fill="#473700"/><rect x="615" y="0" width="1.05" height="53.4" fill="#4a3800"/><rect x="616" y="0" width="1.05" height="53.4" fill="#4e3b00"/><rect x="617" y="0" width="1.05" height="53.4" fill="#513d00"/><rect x="618" y="0" width="1.05" height="53.4" fill="#533e00"/><rect x="619" y="0" width="1.05" height="53.4" fill="#543e00"/><rect x="620" y="0" width="1.05" height="53.4" fill="#523d00"/><rect x="621" y="0" width="1.05" height="53.4" fill="#503b00"/><rect x="622" y="0" width="1.05" height="53.4" fill="#513b00"/><rect x="623" y="0" width="1.05" height="53.4" fill="#533c00"/><rect x="624" y="0" width="1.05" height="53.4" fill="#563e00"/><rect x="625" y="0" width="1.05" height="53.4" fill="#583f00"/><rect x="626" y="0" width="1.05" height="53.4" fill="#5b4000"/><rect x="627" y="0" width="1.05" height="53.4" fill="#5c4100"/><rect x="628" y="0" width="1.05" height="53.4" fill="#5d4100"/><rect x="629" y="0" width="1.05" height="53.4" fill="#5d4100"/><rect x="630" y="0" width="1.05" height="53.4" fill="#5e4100"/><rect x="631" y="0" width="1.05" height="53.4" fill="#614200"/><rect x="632" y="0" width="1.05" height="53.4" fill="#644400"/><rect x="633" y="0" width="1.05" height="53.4" fill="#664500"/><rect x="634" y="0" width="1.05" height="53.4" fill="#664400"/><rect x="635" y="0" width="1.05" height="53.4" fill="#654300"/><rect x="636" y="0" width="1.05" height="53.4" fill="#644200"/><rect x="637" y="0" width="1.05" height="53.4" fill="#654200"/><rect x="638" y="0" width="1.05" height="53.4" fill="#684300"/><rect x="639" y="0" width="1.05" height="53.4" fill="#6a4400"/><rect x="640" y="0" width="1.05" height="53.4" fill="#694300"/><rect x="641" y="0" width="1.05" height="53.4" fill="#674100"/><rect x="642" y="0" width="1.05" height="53.4" fill="#674100"/><rect x="643" y="0" width="1.05" height="53.4" fill="#6a4200"/><rect x="644" y="0" width="1.05" height="53.4" fill="#6d4300"/><rect x="645" y="0" width="1.05" height="53.4" fill="#704500"/><rect x="646" y="0" width="1.05" height="53.4" fill="#734600"/><rect x="647" y="0" width="1.05" height="53.4" fill="#734500"/><rect x="648" y="0" width="1.05" height="53.4" fill="#714400"/><rect x="649" y="0" width="1.05" height="53.4" fill="#744400"/><rect x="650" y="0" width="1.05" height="53.4" fill="#744400"/><rect x="651" y="0" width="1.05" height="53.4" fill="#734300"/><rect x="652" y="0" width="1.05" height="53.4" fill="#744300"/><rect x="653" y="0" width="1.05" height="53.4" fill="#774400"/><rect x="654" y="0" width="1.05" height="53.4" fill="#7c4600"/><rect x="655" y="0" width="1.05" height="53.4" fill="#7d4600"/><rect x="656" y="0" width="1.05" height="53.4" fill="#7a4400"/><rect x="657" y="0" width="1.05" height="53.4" fill="#814700"/><rect x="658" y="0" width="1.05" height="53.4" fill="#874900"/><rect x="659" y="0" width="1.05" height="53.4" fill="#834700"/><rect x="660" y="0" width="1.05" height="53.4" fill="#733d00"/><rect x="661" y="0" width="1.05" height="53.4" fill="#613300"/><rect x="662" y="0" width="1.05" height="53.4" fill="#512a00"/><rect x="663" y="0" width="1.05" height="53.4" fill="#422200"/><rect x="664" y="0" width="1.05" height="53.4" fill="#3f2000"/><rect x="665" y="0" width="1.05" height="53.4" fill="#412100"/><rect x="666" y="0" width="1.05" height="53.4" fill="#412100"/><rect x="667" y="0" width="1.05" height="53.4" fill="#412000"/><rect x="668" y="0" width="1.05" height="53.4" fill="#422000"/><rect x="669" y="0" width="1.05" height="53.4" fill="#3f1e00"/><rect x="670" y="0" width="1.05" height="53.4" fill="#3a1c00"/><rect x="671" y="0" width="1.05" height="53.4" fill="#371a00"/><rect x="672" y="0" width="1.05" height="53.4" fill="#381a00"/><rect x="673" y="0" width="1.05" height="53.4" fill="#3b1b00"/><rect x="674" y="0" width="1.05" height="53.4" fill="#3d1c00"/><rect x="675" y="0" width="1.05" height="53.4" fill="#3f1c00"/><rect x="676" y="0" width="1.05" height="53.4" fill="#3e1c00"/><rect x="677" y="0" width="1.05" height="53.4" fill="#3b1a00"/><rect x="678" y="0" width="1.05" height="53.4" fill="#381800"/><rect x="679" y="0" width="1.05" height="53.4" fill="#371800"/><rect x="680" y="0" width="1.05" height="53.4" fill="#361700"/><rect x="681" y="0" width="1.05" height="53.4" fill="#351600"/><rect x="682" y="0" width="1.05" height="53.4" fill="#361600"/><rect x="683" y="0" width="1.05" height="53.4" fill="#381700"/><rect x="684" y="0" width="1.05" height="53.4" fill="#391700"/><rect x="685" y="0" width="1.05" height="53.4" fill="#3b1700"/><rect x="686" y="0" width="1.05" height="53.4" fill="#3d1800"/><rect x="687" y="0" width="1.05" height="53.4" fill="#3f1800"/><rect x="688" y="0" width="1.05" height="53.4" fill="#411800"/><rect x="689" y="0" width="1.05" height="53.4" fill="#421900"/><rect x="690" y="0" width="1.05" height="53.4" fill="#451900"/><rect x="691" y="0" width="1.05" height="53.4" fill="#471900"/><rect x="692" y="0" width="1.05" height="53.4" fill="#471900"/><rect x="693" y="0" width="1.05" height="53.4" fill="#471900"/><rect x="694" y="0" width="1.05" height="53.4" fill="#471800"/><rect x="695" y="0" width="1.05" height="53.4" fill="#4a1900"/><rect x="696" y="0" width="1.05" height="53.4" fill="#4d1900"/><rect x="697" y="0" width="1.05" height="53.4" fill="#501a00"/><rect x="698" y="0" width="1.05" height="53.4" fill="#511a00"/><rect x="699" y="0" width="1.05" height="53.4" fill="#511900"/><rect x="700" y="0" width="1.05" height="53.4" fill="#531900"/><rect x="701" y="0" width="1.05" height="53.4" fill="#571a00"/><rect x="702" y="0" width="1.05" height="53.4" fill="#5b1b00"/><rect x="703" y="0" width="1.05" height="53.4" fill="#601c00"/><rect x="704" y="0" width="1.05" height="53.4" fill="#631c00"/><rect x="705" y="0" width="1.05" height="53.4" fill="#651c00"/><rect x="706" y="0" width="1.05" height="53.4" fill="#651b00"/><rect x="707" y="0" width="1.05" height="53.4" fill="#661b00"/><rect x="708" y="0" width="1.05" height="53.4" fill="#6a1b00"/><rect x="709" y="0" width="1.05" height="53.4" fill="#6e1b00"/><rect x="710" y="0" width="1.05" height="53.4" fill="#711b00"/><rect x="711" y="0" width="1.05" height="53.4" fill="#731b00"/><rect x="712" y="0" width="1.05" height="53.4" fill="#741a00"/><rect x="713" y="0" width="1.05" height="53.4" fill="#731900"/><rect x="714" y="0" width="1.05" height="53.4" fill="#6f1800"/><rect x="715" y="0" width="1.05" height="53.4" fill="#6c1600"/><rect x="716" y="0" width="1.05" height="53.4" fill="#691500"/><rect x="717" y="0" width="1.05" height="53.4" fill="#6c1500"/><rect x="718" y="0" width="1.05" height="53.4" fill="#721500"/><rect x="719" y="0" width="1.05" height="53.4" fill="#7a1600"/><rect x="720" y="0" width="1.05" height="53.4" fill="#7e1600"/><rect x="721" y="0" width="1.05" height="53.4" fill="#7f1500"/><rect x="722" y="0" width="1.05" height="53.4" fill="#7e1400"/><rect x="723" y="0" width="1.05" height="53.4" fill="#7d1300"/><rect x="724" y="0" width="1.05" height="53.4" fill="#7e1200"/><rect x="725" y="0" width="1.05" height="53.4" fill="#811200"/><rect x="726" y="0" width="1.05" height="53.4" fill="#851100"/><rect x="727" y="0" width="1.05" height="53.4" fill="#8c1100"/><rect x="728" y="0" width="1.05" height="53.4" fill="#921100"/><rect x="729" y="0" width="1.05" height="53.4" fill="#931000"/><rect x="730" y="0" width="1.05" height="53.4" fill="#8f0e00"/><rect x="731" y="0" width="1.05" height="53.4" fill="#880c00"/><rect x="732" y="0" width="1.05" height="53.4" fill="#830b00"/><rect x="733" y="0" width="1.05" height="53.4" fill="#800900"/><rect x="734" y="0" width="1.05" height="53.4" fill="#830800"/><rect x="735" y="0" width="1.05" height="53.4" fill="#880700"/><rect x="736" y="0" width="1.05" height="53.4" fill="#8d0600"/><rect x="737" y="0" width="1.05" height="53.4" fill="#930500"/><rect x="738" y="0" width="1.05" height="53.4" fill="#980400"/><rect x="739" y="0" width="1.05" height="53.4" fill="#960200"/><rect x="740" y="0" width="1.05" height="53.4" fill="#910000"/><rect x="741" y="0" width="1.05" height="53.4" fill="#910000"/><rect x="742" y="0" width="1.05" height="53.4" fill="#960000"/><rect x="743" y="0" width="1.05" height="53.4" fill="#9c0000"/><rect x="744" y="0" width="1.05" height="53.4" fill="#a10000"/><rect x="745" y="0" width="1.05" height="53.4" fill="#a60000"/><rect x="746" y="0" width="1.05" height="53.4" fill="#a40000"/><rect x="747" y="0" width="1.05" height="53.4" fill="#9a0000"/><rect x="748" y="0" width="1.05" height="53.4" fill="#900000"/><rect x="749" y="0" width="1.05" height="53.4" fill="#880000"/><rect x="750" y="0" width="1.05" height="53.4" fill="#850000"/><rect x="751" y="0" width="1.05" height="53.4" fill="#850000"/><rect x="752" y="0" width="1.05" height="53.4" fill="#840000"/><rect x="753" y="0" width="1.05" height="53.4" fill="#850000"/><rect x="754" y="0" width="1.05" height="53.4" fill="#8b0000"/><rect x="755" y="0" width="1.05" height="53.4" fill="#910000"/><rect x="756" y="0" width="1.05" height="53.4" fill="#920000"/><rect x="757" y="0" width="1.05" height="53.4" fill="#900000"/><rect x="758" y="0" width="1.05" height="53.4" fill="#900000"/><rect x="759" y="0" width="1.05" height="53.4" fill="#960000"/><rect x="760" y="0" width="1.05" height="53.4" fill="#9c0000"/><rect x="761" y="0" width="1.05" height="53.4" fill="#a30000"/><rect x="762" y="0" width="1.05" height="53.4" fill="#a70000"/><rect x="763" y="0" width="1.05" height="53.4" fill="#ab0000"/><rect x="764" y="0" width="1.05" height="53.4" fill="#af0000"/><rect x="765" y="0" width="1.05" height="53.4" fill="#ab0000"/><rect x="766" y="0" width="1.05" height="53.4" fill="#a00000"/><rect x="767" y="0" width="1.05" height="53.4" fill="#960000"/><rect x="768" y="0" width="1.05" height="53.4" fill="#910000"/><rect x="769" y="0" width="1.05" height="53.4" fill="#900000"/><rect x="770" y="0" width="1.05" height="53.4" fill="#8c0000"/><rect x="771" y="0" width="1.05" height="53.4" fill="#870000"/><rect x="772" y="0" width="1.05" height="53.4" fill="#860000"/><rect x="773" y="0" width="1.05" height="53.4" fill="#890000"/><rect x="774" y="0" width="1.05" height="53.4" fill="#8a0000"/><rect x="775" y="0" width="1.05" height="53.4" fill="#8a0000"/><rect x="776" y="0" width="1.05" height="53.4" fill="#8d0000"/><rect x="777" y="0" width="1.05" height="53.4" fill="#920000"/><rect x="778" y="0" width="1.05" height="53.4" fill="#930000"/><rect x="779" y="0" width="1.05" height="53.4" fill="#8d0000"/><rect x="780" y="0" width="1.05" height="53.4" fill="#8a0000"/><rect x="781" y="0" width="1.05" height="53.4" fill="#8a0000"/><rect x="782" y="0" width="1.05" height="53.4" fill="#8a0000"/><rect x="783" y="0" width="1.05" height="53.4" fill="#8a0000"/><rect x="784" y="0" width="1.05" height="53.4" fill="#8b0000"/><rect x="785" y="0" width="1.05" height="53.4" fill="#880000"/><rect x="786" y="0" width="1.05" height="53.4" fill="#840000"/><rect x="787" y="0" width="1.05" height="53.4" fill="#800000"/><rect x="788" y="0" width="1.05" height="53.4" fill="#7d0000"/><rect x="789" y="0" width="1.05" height="53.4" fill="#7d0000"/><rect x="790" y="0" width="1.05" height="53.4" fill="#7d0000"/><rect x="791" y="0" width="1.05" height="53.4" fill="#7b0000"/><rect x="792" y="0" width="1.05" height="53.4" fill="#7c0000"/><rect x="793" y="0" width="1.05" height="53.4" fill="#790000"/><rect x="794" y="0" width="1.05" height="53.4" fill="#6f0000"/><rect x="795" y="0" width="1.05" height="53.4" fill="#660000"/><rect x="796" y="0" width="1.05" height="53.4" fill="#640000"/><rect x="797" y="0" width="1.05" height="53.4" fill="#670000"/><rect x="798" y="0" width="1.05" height="53.4" fill="#6b0000"/><rect x="799" y="0" width="1.05" height="53.4" fill="#6f0000"/><rect x="800" y="0" width="1.05" height="53.4" fill="#710000"/><rect x="801" y="0" width="1.05" height="53.4" fill="#700000"/><rect x="802" y="0" width="1.05" height="53.4" fill="#670000"/><rect x="803" y="0" width="1.05" height="53.4" fill="#5d0000"/><rect x="804" y="0" width="1.05" height="53.4" fill="#5b0000"/><rect x="805" y="0" width="1.05" height="53.4" fill="#5e0000"/><rect x="806" y="0" width="1.05" height="53.4" fill="#610000"/><rect x="807" y="0" width="1.05" height="53.4" fill="#650000"/><rect x="808" y="0" width="1.05" height="53.4" fill="#680000"/><rect x="809" y="0" width="1.05" height="53.4" fill="#690000"/><rect x="810" y="0" width="1.05" height="53.4" fill="#680000"/><rect x="811" y="0" width="1.05" height="53.4" fill="#610000"/><rect x="812" y="0" width="1.05" height="53.4" fill="#580000"/><rect x="813" y="0" width="1.05" height="53.4" fill="#550000"/><rect x="814" y="0" width="1.05" height="53.4" fill="#570000"/><rect x="815" y="0" width="1.05" height="53.4" fill="#5a0000"/><rect x="816" y="0" width="1.05" height="53.4" fill="#5e0000"/><rect x="817" y="0" width="1.05" height="53.4" fill="#600000"/><rect x="818" y="0" width="1.05" height="53.4" fill="#620000"/><rect x="819" y="0" width="1.05" height="53.4" fill="#630000"/><rect x="820" y="0" width="1.05" height="53.4" fill="#610000"/><rect x="821" y="0" width="1.05" height="53.4" fill="#5f0000"/><rect x="822" y="0" width="1.05" height="53.4" fill="#610000"/><rect x="823" y="0" width="1.05" height="53.4" fill="#640000"/><rect x="824" y="0" width="1.05" height="53.4" fill="#690000"/><rect x="825" y="0" width="1.05" height="53.4" fill="#6e0000"/><rect x="826" y="0" width="1.05" height="53.4" fill="#720000"/><rect x="827" y="0" width="1.05" height="53.4" fill="#770000"/><rect x="828" y="0" width="1.05" height="53.4" fill="#770000"/><rect x="829" y="0" width="1.05" height="53.4" fill="#6f0000"/><rect x="830" y="0" width="1.05" height="53.4" fill="#670000"/><rect x="831" y="0" width="1.05" height="53.4" fill="#650000"/><rect x="832" y="0" width="1.05" height="53.4" fill="#680000"/><rect x="833" y="0" width="1.05" height="53.4" fill="#6d0000"/><rect x="834" y="0" width="1.05" height="53.4" fill="#720000"/><rect x="835" y="0" width="1.05" height="53.4" fill="#760000"/><rect x="836" y="0" width="1.05" height="53.4" fill="#790000"/><rect x="837" y="0" width="1.05" height="53.4" fill="#7a0000"/><rect x="838" y="0" width="1.05" height="53.4" fill="#7a0000"/><rect x="839" y="0" width="1.05" height="53.4" fill="#7a0000"/><rect x="840" y="0" width="1.05" height="53.4" fill="#7c0000"/><rect x="841" y="0" width="1.05" height="53.4" fill="#800000"/><rect x="842" y="0" width="1.05" height="53.4" fill="#820000"/><rect x="843" y="0" width="1.05" height="53.4" fill="#870000"/><rect x="844" y="0" width="1.05" height="53.4" fill="#8c0000"/><rect x="845" y="0" width="1.05" height="53.4" fill="#900000"/><rect x="846" y="0" width="1.05" height="53.4" fill="#920000"/><rect x="847" y="0" width="1.05" height="53.4" fill="#900000"/><rect x="848" y="0" width="1.05" height="53.4" fill="#8a0000"/><rect x="849" y="0" width="1.05" height="53.4" fill="#870000"/><rect x="850" y="0" width="1.05" height="53.4" fill="#890000"/><rect x="851" y="0" width="1.05" height="53.4" fill="#850000"/><rect x="852" y="0" width="1.05" height="53.4" fill="#750000"/><rect x="853" y="0" width="1.05" height="53.4" fill="#690000"/><rect x="854" y="0" width="1.05" height="53.4" fill="#7b0000"/><rect x="855" y="0" width="1.05" height="53.4" fill="#8d0000"/><rect x="856" y="0" width="1.05" height="53.4" fill="#930000"/><rect x="857" y="0" width="1.05" height="53.4" fill="#920000"/><rect x="858" y="0" width="1.05" height="53.4" fill="#900000"/><rect x="859" y="0" width="1.05" height="53.4" fill="#940000"/><rect x="860" y="0" width="1.05" height="53.4" fill="#990000"/><rect x="861" y="0" width="1.05" height="53.4" fill="#a00000"/><rect x="862" y="0" width="1.05" height="53.4" fill="#a80000"/><rect x="863" y="0" width="1.05" height="53.4" fill="#b50000"/><rect x="864" y="0" width="1.05" height="53.4" fill="#ba0000"/><rect x="865" y="0" width="1.05" height="53.4" fill="#ba0000"/><rect x="866" y="0" width="1.05" height="53.4" fill="#b60000"/><rect x="867" y="0" width="1.05" height="53.4" fill="#b10000"/><rect x="868" y="0" width="1.05" height="53.4" fill="#b10000"/><rect x="869" y="0" width="1.05" height="53.4" fill="#b70000"/><rect x="870" y="0" width="1.05" height="53.4" fill="#be0000"/><rect x="871" y="0" width="1.05" height="53.4" fill="#c40000"/><rect x="872" y="0" width="1.05" height="53.4" fill="#ca0000"/><rect x="873" y="0" width="1.05" height="53.4" fill="#cf0000"/><rect x="874" y="0" width="1.05" height="53.4" fill="#d20000"/><rect x="875" y="0" width="1.05" height="53.4" fill="#d30000"/><rect x="876" y="0" width="1.05" height="53.4" fill="#d50000"/><rect x="877" y="0" width="1.05" height="53.4" fill="#df0000"/><rect x="878" y="0" width="1.05" height="53.4" fill="#e90000"/><rect x="879" y="0" width="1.05" height="53.4" fill="#f30000"/><rect x="880" y="0" width="1.05" height="53.4" fill="#f40000"/><rect x="881" y="0" width="1.05" height="53.4" fill="#f50000"/><rect x="882" y="0" width="1.05" height="53.4" fill="#f80000"/><rect x="883" y="0" width="1.05" height="53.4" fill="#fe0000"/><rect x="884" y="0" width="1.05" height="53.4" fill="#fe0000"/><rect x="885" y="0" width="1.05" height="53.4" fill="#f30000"/><rect x="886" y="0" width="1.05" height="53.4" fill="#f20000"/><rect x="887" y="0" width="1.05" height="53.4" fill="#f50000"/></g>
</svg>
<div class="t1">HD184192</div>
<div class="t2">Type-M4/M5</div>
<div class="xl" style="left:85.9px">3800</div>
<div class="xl" style="left:139.7px">4000</div>
<div class="xl" style="left:193.4px">4200</div>
<div class="xl" style="left:247.2px">4400</div>
<div class="xl" style="left:300.9px">4600</div>
<div class="xl" style="left:354.6px">4800</div>
<div class="xl" style="left:408.4px">5000</div>
<div class="xl" style="left:462.1px">5200</div>
<div class="xl" style="left:515.9px">5400</div>
<div class="xl" style="left:569.6px">5600</div>
<div class="xl" style="left:623.4px">5800</div>
<div class="xl" style="left:677.1px">6000</div>
<div class="xl" style="left:730.9px">6200</div>
<div class="xl" style="left:784.6px">6400</div>
<div class="xl" style="left:838.4px">6600</div>
<div class="xl" style="left:892.1px">6800</div>
<div class="yl" style="top:518.0px">0</div>
<div class="yl" style="top:437.4px">1</div>
<div class="yl" style="top:356.9px">2</div>
<div class="yl" style="top:276.4px">3</div>
<div class="yl" style="top:195.8px">4</div>
<div class="yl" style="top:115.2px">5</div>
<div class="xt">Wavelength &#197;</div>
<div class="wm">BASS Project 1.6 Rev 3</div>
</body></html>
